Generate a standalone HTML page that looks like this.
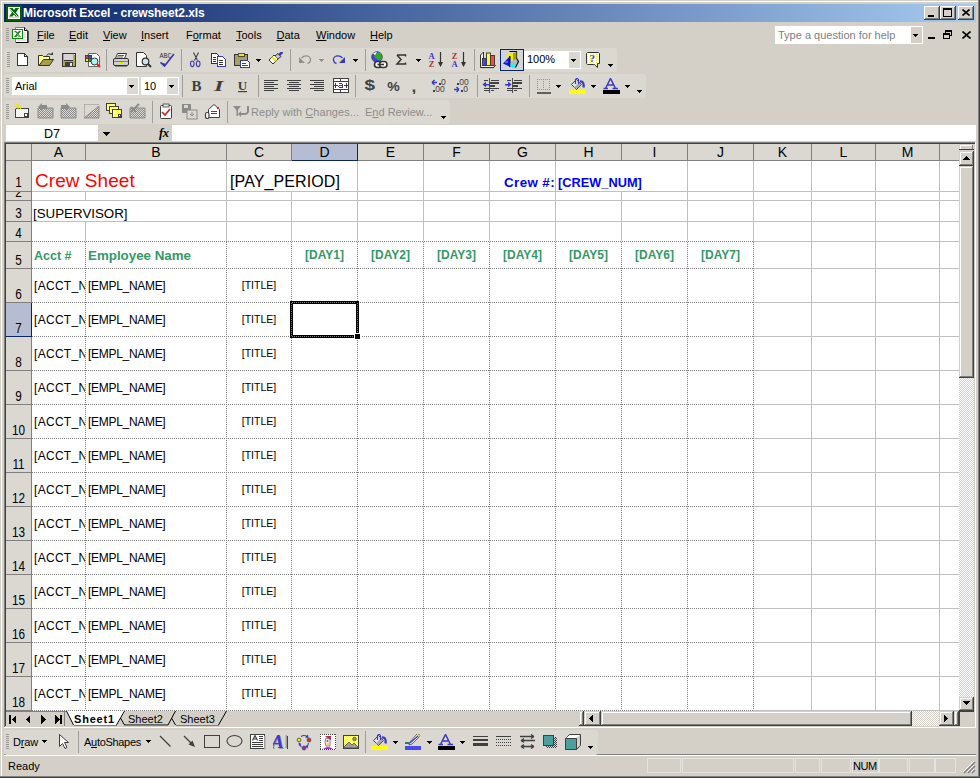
<!DOCTYPE html>
<html><head><meta charset="utf-8"><style>
html,body{margin:0;padding:0;}
body{width:980px;height:778px;position:relative;overflow:hidden;background:#D4D0C8;font-family:"Liberation Sans",sans-serif;}
body div, body svg{position:absolute;}
.t{white-space:nowrap;}
u{text-decoration:underline;text-underline-offset:1px;}
</style></head><body>
<div style="left:0px;top:0px;width:980px;height:778px;background:#D4D0C8;"></div>
<div style="left:1px;top:1px;width:977px;height:1px;background:#FFFFFF;"></div>
<div style="left:1px;top:1px;width:1px;height:775px;background:#FFFFFF;"></div>
<div style="left:978px;top:0px;width:1px;height:777px;background:#808080;"></div>
<div style="left:0px;top:776px;width:979px;height:1px;background:#808080;"></div>
<div style="left:979px;top:0px;width:1px;height:778px;background:#404040;"></div>
<div style="left:0px;top:777px;width:980px;height:1px;background:#404040;"></div>
<div style="left:4px;top:4px;width:972px;height:18px;background:linear-gradient(90deg,#0A246A,#A6CAF0);"></div>
<svg style="left:6px;top:5px;shape-rendering:auto" width="16" height="16" viewBox="0 0 16 16" shape-rendering="crispEdges"><rect x="0" y="0" width="16" height="16" fill="#0A5A0A"/><rect x="2" y="2" width="12" height="12" fill="#fff"/><path d="M3 3H6.5L8 5L9.5 3H13L10 7.5L13 11.5H9.5L8 9.5L6.5 11.5H3L6 7.5Z" fill="#0A6A0A"/><path d="M3.5 3.5L11.5 11.5" stroke="#fff" stroke-width="0.8"/><rect x="3" y="12" width="10" height="0.8" fill="#0A6A0A" opacity="0.3"/></svg>
<div class="t" style="left:23px;top:7px;font-size:12px;line-height:12px;color:#fff;font-weight:bold;letter-spacing:-0.1px;">Microsoft Excel - crewsheet2.xls</div>
<div style="left:924px;top:6px;width:16px;height:14px;background:#404040;"></div>
<div style="left:924px;top:6px;width:15px;height:13px;background:#FFFFFF;"></div>
<div style="left:925px;top:7px;width:14px;height:12px;background:#808080;"></div>
<div style="left:925px;top:7px;width:13px;height:11px;background:#D4D0C8;"></div>
<div style="left:940px;top:6px;width:16px;height:14px;background:#404040;"></div>
<div style="left:940px;top:6px;width:15px;height:13px;background:#FFFFFF;"></div>
<div style="left:941px;top:7px;width:14px;height:12px;background:#808080;"></div>
<div style="left:941px;top:7px;width:13px;height:11px;background:#D4D0C8;"></div>
<div style="left:958px;top:6px;width:16px;height:14px;background:#404040;"></div>
<div style="left:958px;top:6px;width:15px;height:13px;background:#FFFFFF;"></div>
<div style="left:959px;top:7px;width:14px;height:12px;background:#808080;"></div>
<div style="left:959px;top:7px;width:13px;height:11px;background:#D4D0C8;"></div>
<div style="left:928px;top:15px;width:6px;height:2px;background:#000;"></div>
<svg style="left:943px;top:8px;" width="10" height="9" viewBox="0 0 10 9" shape-rendering="crispEdges"><rect x="0" y="0" width="9" height="9" fill="#000"/><rect x="1" y="2" width="7" height="6" fill="#D4D0C8"/></svg>
<svg style="left:962px;top:9px;" width="8" height="7" viewBox="0 0 8 7" shape-rendering="crispEdges"><path d="M0.5 0.5 L7.5 6.5 M7.5 0.5 L0.5 6.5" stroke="#000" stroke-width="1.6" shape-rendering="auto"/></svg>
<div style="left:6px;top:28px;width:3px;height:1px;background:#9A9893;"></div>
<div style="left:6px;top:30px;width:3px;height:1px;background:#9A9893;"></div>
<div style="left:6px;top:32px;width:3px;height:1px;background:#9A9893;"></div>
<div style="left:6px;top:34px;width:3px;height:1px;background:#9A9893;"></div>
<div style="left:6px;top:36px;width:3px;height:1px;background:#9A9893;"></div>
<div style="left:6px;top:38px;width:3px;height:1px;background:#9A9893;"></div>
<div style="left:6px;top:40px;width:3px;height:1px;background:#9A9893;"></div>
<svg style="left:12px;top:27px;shape-rendering:auto" width="17" height="17" viewBox="0 0 17 17" shape-rendering="crispEdges"><path d="M3.5 0.5H12.5L15.5 3.5V15.5H3.5Z" fill="#fff" stroke="#808080"/><path d="M4 15.5H16V4" fill="none" stroke="#000" stroke-width="1.2"/><path d="M12.5 0.5V3.5H15.5" fill="none" stroke="#000"/><path d="M10 6H14M10 8H14M10 10H14M5 13H14" stroke="#C8C8C8"/><rect x="0" y="2" width="11" height="10" fill="#0A8A0A"/><rect x="1" y="3" width="9" height="8" fill="#fff"/><path d="M2 4H4L5.5 5.5L7 4H9L6.5 7L9 10H7L5.5 8.5L4 10H2L4.5 7Z" fill="#0A7A0A"/><path d="M2.5 4.5L8 9.5" stroke="#fff" stroke-width="0.6"/></svg>
<div class="t" style="left:37px;top:30px;font-size:11px;line-height:11px;color:#000;"><u>F</u>ile</div>
<div class="t" style="left:69px;top:30px;font-size:11px;line-height:11px;color:#000;"><u>E</u>dit</div>
<div class="t" style="left:103px;top:30px;font-size:11px;line-height:11px;color:#000;"><u>V</u>iew</div>
<div class="t" style="left:141px;top:30px;font-size:11px;line-height:11px;color:#000;"><u>I</u>nsert</div>
<div class="t" style="left:186px;top:30px;font-size:11px;line-height:11px;color:#000;">F<u>o</u>rmat</div>
<div class="t" style="left:236px;top:30px;font-size:11px;line-height:11px;color:#000;"><u>T</u>ools</div>
<div class="t" style="left:276.5px;top:30px;font-size:11px;line-height:11px;color:#000;"><u>D</u>ata</div>
<div class="t" style="left:316px;top:30px;font-size:11px;line-height:11px;color:#000;"><u>W</u>indow</div>
<div class="t" style="left:370px;top:30px;font-size:11px;line-height:11px;color:#000;"><u>H</u>elp</div>
<div style="left:775px;top:26px;width:148px;height:18px;background:#fff;"></div>
<div style="left:911px;top:27px;width:11px;height:16px;background:#D4D0C8;"></div>
<svg style="left:913px;top:34px;" width="5" height="3" viewBox="0 0 5 3" shape-rendering="crispEdges"><rect x="0" y="0" width="5" height="1" fill="#000"/><rect x="1" y="1" width="3" height="1" fill="#000"/><rect x="2" y="2" width="1" height="1" fill="#000"/></svg>
<div class="t" style="left:778px;top:30px;font-size:11px;line-height:11px;color:#808080;">Type a question for help</div>
<div style="left:928px;top:37px;width:7px;height:2px;background:#000;"></div>
<svg style="left:943px;top:30px;" width="9" height="9" viewBox="0 0 9 9" shape-rendering="crispEdges"><rect x="2" y="0" width="7" height="6" fill="#000"/><rect x="3" y="2" width="5" height="3" fill="#D4D0C8"/><rect x="0" y="3" width="7" height="6" fill="#000"/><rect x="1" y="5" width="5" height="3" fill="#D4D0C8"/></svg>
<svg style="left:962px;top:31px;" width="9" height="8" viewBox="0 0 9 8" shape-rendering="crispEdges"><path d="M0.5 0.5 L8.5 7.5 M8.5 0.5 L0.5 7.5" stroke="#000" stroke-width="1.6" shape-rendering="auto"/></svg>
<div style="left:4px;top:48px;width:613px;height:24px;background:#DBD8D1;border-radius:3px;"></div>
<div style="left:4px;top:74px;width:642px;height:24px;background:#DBD8D1;border-radius:3px;"></div>
<div style="left:4px;top:100px;width:446px;height:24px;background:#DBD8D1;border-radius:3px;"></div>
<div style="left:7px;top:52px;width:3px;height:1px;background:#9A9893;"></div>
<div style="left:7px;top:54px;width:3px;height:1px;background:#9A9893;"></div>
<div style="left:7px;top:56px;width:3px;height:1px;background:#9A9893;"></div>
<div style="left:7px;top:58px;width:3px;height:1px;background:#9A9893;"></div>
<div style="left:7px;top:60px;width:3px;height:1px;background:#9A9893;"></div>
<div style="left:7px;top:62px;width:3px;height:1px;background:#9A9893;"></div>
<div style="left:7px;top:64px;width:3px;height:1px;background:#9A9893;"></div>
<div style="left:7px;top:66px;width:3px;height:1px;background:#9A9893;"></div>
<div style="left:6px;top:78px;width:3px;height:1px;background:#9A9893;"></div>
<div style="left:6px;top:80px;width:3px;height:1px;background:#9A9893;"></div>
<div style="left:6px;top:82px;width:3px;height:1px;background:#9A9893;"></div>
<div style="left:6px;top:84px;width:3px;height:1px;background:#9A9893;"></div>
<div style="left:6px;top:86px;width:3px;height:1px;background:#9A9893;"></div>
<div style="left:6px;top:88px;width:3px;height:1px;background:#9A9893;"></div>
<div style="left:6px;top:90px;width:3px;height:1px;background:#9A9893;"></div>
<div style="left:6px;top:92px;width:3px;height:1px;background:#9A9893;"></div>
<div style="left:6px;top:104px;width:3px;height:1px;background:#9A9893;"></div>
<div style="left:6px;top:106px;width:3px;height:1px;background:#9A9893;"></div>
<div style="left:6px;top:108px;width:3px;height:1px;background:#9A9893;"></div>
<div style="left:6px;top:110px;width:3px;height:1px;background:#9A9893;"></div>
<div style="left:6px;top:112px;width:3px;height:1px;background:#9A9893;"></div>
<div style="left:6px;top:114px;width:3px;height:1px;background:#9A9893;"></div>
<div style="left:6px;top:116px;width:3px;height:1px;background:#9A9893;"></div>
<div style="left:6px;top:118px;width:3px;height:1px;background:#9A9893;"></div>
<div style="left:106px;top:49px;width:1px;height:22px;background:#A09E99;"></div>
<div style="left:181px;top:49px;width:1px;height:22px;background:#A09E99;"></div>
<div style="left:290px;top:49px;width:1px;height:22px;background:#A09E99;"></div>
<div style="left:365px;top:49px;width:1px;height:22px;background:#A09E99;"></div>
<div style="left:474px;top:49px;width:1px;height:22px;background:#A09E99;"></div>
<div style="left:182px;top:75px;width:1px;height:22px;background:#A09E99;"></div>
<div style="left:258px;top:75px;width:1px;height:22px;background:#A09E99;"></div>
<div style="left:355px;top:75px;width:1px;height:22px;background:#A09E99;"></div>
<div style="left:477px;top:75px;width:1px;height:22px;background:#A09E99;"></div>
<div style="left:529px;top:75px;width:1px;height:22px;background:#A09E99;"></div>
<div style="left:152px;top:101px;width:1px;height:22px;background:#A09E99;"></div>
<div style="left:227px;top:101px;width:1px;height:22px;background:#A09E99;"></div>
<div style="left:6px;top:125px;width:92px;height:16px;background:#fff;"></div>
<div class="t" style="left:6px;top:128px;font-size:12.6px;line-height:12.6px;color:#000;width:92px;text-align:center;">D7</div>
<svg style="left:103px;top:132px;" width="7" height="4" viewBox="0 0 7 4" shape-rendering="crispEdges"><rect x="0" y="0" width="7" height="1" fill="#000"/><rect x="1" y="1" width="5" height="1" fill="#000"/><rect x="2" y="2" width="3" height="1" fill="#000"/><rect x="3" y="3" width="1" height="1" fill="#000"/></svg>
<div class="t" style="left:159px;top:127px;font-size:12.5px;line-height:12.5px;color:#000;font-weight:bold;font-family:Liberation Serif;letter-spacing:-0.5px;"><i>fx</i></div>
<div style="left:172px;top:125px;width:804px;height:16px;background:#fff;"></div>
<div style="left:4px;top:142px;width:971px;height:1px;background:#808080;"></div>
<div style="left:4px;top:142px;width:1px;height:585px;background:#808080;"></div>
<div style="left:5px;top:143px;width:970px;height:1px;background:#404040;"></div>
<div style="left:5px;top:143px;width:1px;height:583px;background:#404040;"></div>
<div style="left:975px;top:142px;width:1px;height:586px;background:#fff;"></div>
<div style="left:4px;top:727px;width:972px;height:1px;background:#fff;"></div>
<div style="left:32px;top:161px;width:927px;height:550px;background:#fff;"></div>
<div style="left:6px;top:144px;width:953px;height:16px;background:#DBD8D1;"></div>
<div style="left:6px;top:160px;width:953px;height:1px;background:#808080;"></div>
<div style="left:6px;top:161px;width:25px;height:550px;background:#DBD8D1;"></div>
<div style="left:31px;top:144px;width:1px;height:567px;background:#808080;"></div>
<div style="left:292px;top:144px;width:65px;height:16px;background:#B6BDD2;"></div>
<div style="left:292px;top:160px;width:66px;height:1px;background:#0A246A;"></div>
<div style="left:357px;top:144px;width:1px;height:17px;background:#0A246A;"></div>
<div style="left:6px;top:303px;width:25px;height:33px;background:#B6BDD2;"></div>
<div style="left:6px;top:336px;width:26px;height:1px;background:#0A246A;"></div>
<div style="left:31px;top:303px;width:1px;height:34px;background:#0A246A;"></div>
<div style="left:85px;top:144px;width:1px;height:16px;background:#808080;"></div>
<div style="left:226px;top:144px;width:1px;height:16px;background:#808080;"></div>
<div style="left:291px;top:144px;width:1px;height:16px;background:#808080;"></div>
<div style="left:423px;top:144px;width:1px;height:16px;background:#808080;"></div>
<div style="left:489px;top:144px;width:1px;height:16px;background:#808080;"></div>
<div style="left:555px;top:144px;width:1px;height:16px;background:#808080;"></div>
<div style="left:621px;top:144px;width:1px;height:16px;background:#808080;"></div>
<div style="left:687px;top:144px;width:1px;height:16px;background:#808080;"></div>
<div style="left:753px;top:144px;width:1px;height:16px;background:#808080;"></div>
<div style="left:811px;top:144px;width:1px;height:16px;background:#808080;"></div>
<div style="left:875px;top:144px;width:1px;height:16px;background:#808080;"></div>
<div style="left:939px;top:144px;width:1px;height:16px;background:#808080;"></div>
<div class="t" style="left:32px;top:145px;font-size:14px;line-height:14px;color:#000;width:53px;text-align:center;">A</div>
<div class="t" style="left:86px;top:145px;font-size:14px;line-height:14px;color:#000;width:140px;text-align:center;">B</div>
<div class="t" style="left:227px;top:145px;font-size:14px;line-height:14px;color:#000;width:64px;text-align:center;">C</div>
<div class="t" style="left:292px;top:145px;font-size:14px;line-height:14px;color:#000;width:65px;text-align:center;">D</div>
<div class="t" style="left:358px;top:145px;font-size:14px;line-height:14px;color:#000;width:65px;text-align:center;">E</div>
<div class="t" style="left:424px;top:145px;font-size:14px;line-height:14px;color:#000;width:65px;text-align:center;">F</div>
<div class="t" style="left:490px;top:145px;font-size:14px;line-height:14px;color:#000;width:65px;text-align:center;">G</div>
<div class="t" style="left:556px;top:145px;font-size:14px;line-height:14px;color:#000;width:65px;text-align:center;">H</div>
<div class="t" style="left:622px;top:145px;font-size:14px;line-height:14px;color:#000;width:65px;text-align:center;">I</div>
<div class="t" style="left:688px;top:145px;font-size:14px;line-height:14px;color:#000;width:65px;text-align:center;">J</div>
<div class="t" style="left:754px;top:145px;font-size:14px;line-height:14px;color:#000;width:57px;text-align:center;">K</div>
<div class="t" style="left:812px;top:145px;font-size:14px;line-height:14px;color:#000;width:63px;text-align:center;">L</div>
<div class="t" style="left:876px;top:145px;font-size:14px;line-height:14px;color:#000;width:63px;text-align:center;">M</div>
<div style="left:6px;top:191px;width:25px;height:1px;background:#808080;"></div>
<div style="left:6px;top:200px;width:25px;height:1px;background:#808080;"></div>
<div style="left:6px;top:221px;width:25px;height:1px;background:#808080;"></div>
<div style="left:6px;top:241px;width:25px;height:1px;background:#808080;"></div>
<div style="left:6px;top:268px;width:25px;height:1px;background:#808080;"></div>
<div style="left:6px;top:302px;width:25px;height:1px;background:#808080;"></div>
<div style="left:6px;top:370px;width:25px;height:1px;background:#808080;"></div>
<div style="left:6px;top:404px;width:25px;height:1px;background:#808080;"></div>
<div style="left:6px;top:438px;width:25px;height:1px;background:#808080;"></div>
<div style="left:6px;top:472px;width:25px;height:1px;background:#808080;"></div>
<div style="left:6px;top:506px;width:25px;height:1px;background:#808080;"></div>
<div style="left:6px;top:540px;width:25px;height:1px;background:#808080;"></div>
<div style="left:6px;top:574px;width:25px;height:1px;background:#808080;"></div>
<div style="left:6px;top:608px;width:25px;height:1px;background:#808080;"></div>
<div style="left:6px;top:642px;width:25px;height:1px;background:#808080;"></div>
<div style="left:6px;top:676px;width:25px;height:1px;background:#808080;"></div>
<div style="left:6px;top:710px;width:25px;height:1px;background:#808080;"></div>
<div style="left:6px;top:161px;width:25px;height:30px;overflow:hidden">
<div class="t" style="left:0;top:14px;width:25px;text-align:center;font-size:14px;line-height:14px;transform:scaleX(0.84)">1</div></div>
<div style="left:6px;top:192px;width:25px;height:8px;overflow:hidden">
<div class="t" style="left:0;top:-7px;width:25px;text-align:center;font-size:14px;line-height:14px;transform:scaleX(0.84)">2</div></div>
<div style="left:6px;top:201px;width:25px;height:20px;overflow:hidden">
<div class="t" style="left:0;top:5px;width:25px;text-align:center;font-size:14px;line-height:14px;transform:scaleX(0.84)">3</div></div>
<div style="left:6px;top:222px;width:25px;height:19px;overflow:hidden">
<div class="t" style="left:0;top:4px;width:25px;text-align:center;font-size:14px;line-height:14px;transform:scaleX(0.84)">4</div></div>
<div style="left:6px;top:242px;width:25px;height:26px;overflow:hidden">
<div class="t" style="left:0;top:11px;width:25px;text-align:center;font-size:14px;line-height:14px;transform:scaleX(0.84)">5</div></div>
<div style="left:6px;top:269px;width:25px;height:33px;overflow:hidden">
<div class="t" style="left:0;top:18px;width:25px;text-align:center;font-size:14px;line-height:14px;transform:scaleX(0.84)">6</div></div>
<div style="left:6px;top:303px;width:25px;height:33px;overflow:hidden">
<div class="t" style="left:0;top:18px;width:25px;text-align:center;font-size:14px;line-height:14px;transform:scaleX(0.84)">7</div></div>
<div style="left:6px;top:337px;width:25px;height:33px;overflow:hidden">
<div class="t" style="left:0;top:18px;width:25px;text-align:center;font-size:14px;line-height:14px;transform:scaleX(0.84)">8</div></div>
<div style="left:6px;top:371px;width:25px;height:33px;overflow:hidden">
<div class="t" style="left:0;top:18px;width:25px;text-align:center;font-size:14px;line-height:14px;transform:scaleX(0.84)">9</div></div>
<div style="left:6px;top:405px;width:25px;height:33px;overflow:hidden">
<div class="t" style="left:0;top:18px;width:25px;text-align:center;font-size:14px;line-height:14px;transform:scaleX(0.84)">10</div></div>
<div style="left:6px;top:439px;width:25px;height:33px;overflow:hidden">
<div class="t" style="left:0;top:18px;width:25px;text-align:center;font-size:14px;line-height:14px;transform:scaleX(0.84)">11</div></div>
<div style="left:6px;top:473px;width:25px;height:33px;overflow:hidden">
<div class="t" style="left:0;top:18px;width:25px;text-align:center;font-size:14px;line-height:14px;transform:scaleX(0.84)">12</div></div>
<div style="left:6px;top:507px;width:25px;height:33px;overflow:hidden">
<div class="t" style="left:0;top:18px;width:25px;text-align:center;font-size:14px;line-height:14px;transform:scaleX(0.84)">13</div></div>
<div style="left:6px;top:541px;width:25px;height:33px;overflow:hidden">
<div class="t" style="left:0;top:18px;width:25px;text-align:center;font-size:14px;line-height:14px;transform:scaleX(0.84)">14</div></div>
<div style="left:6px;top:575px;width:25px;height:33px;overflow:hidden">
<div class="t" style="left:0;top:18px;width:25px;text-align:center;font-size:14px;line-height:14px;transform:scaleX(0.84)">15</div></div>
<div style="left:6px;top:609px;width:25px;height:33px;overflow:hidden">
<div class="t" style="left:0;top:18px;width:25px;text-align:center;font-size:14px;line-height:14px;transform:scaleX(0.84)">16</div></div>
<div style="left:6px;top:643px;width:25px;height:33px;overflow:hidden">
<div class="t" style="left:0;top:18px;width:25px;text-align:center;font-size:14px;line-height:14px;transform:scaleX(0.84)">17</div></div>
<div style="left:6px;top:677px;width:25px;height:33px;overflow:hidden">
<div class="t" style="left:0;top:18px;width:25px;text-align:center;font-size:14px;line-height:14px;transform:scaleX(0.84)">18</div></div>
<div style="left:32px;top:191px;width:927px;height:1px;background:#C0C0C0;"></div>
<div style="left:32px;top:200px;width:927px;height:1px;background:#C0C0C0;"></div>
<div style="left:32px;top:221px;width:927px;height:1px;background:#C0C0C0;"></div>
<div style="left:32px;top:241px;width:721px;height:1px;background:repeating-linear-gradient(90deg,#808080 0 1px,#fff 1px 2px);"></div>
<div style="left:753px;top:241px;width:206px;height:1px;background:#C0C0C0;"></div>
<div style="left:32px;top:268px;width:721px;height:1px;background:repeating-linear-gradient(90deg,#808080 0 1px,#fff 1px 2px);"></div>
<div style="left:753px;top:268px;width:206px;height:1px;background:#C0C0C0;"></div>
<div style="left:32px;top:302px;width:721px;height:1px;background:repeating-linear-gradient(90deg,#808080 0 1px,#fff 1px 2px);"></div>
<div style="left:753px;top:302px;width:206px;height:1px;background:#C0C0C0;"></div>
<div style="left:32px;top:336px;width:721px;height:1px;background:repeating-linear-gradient(90deg,#808080 0 1px,#fff 1px 2px);"></div>
<div style="left:753px;top:336px;width:206px;height:1px;background:#C0C0C0;"></div>
<div style="left:32px;top:370px;width:721px;height:1px;background:repeating-linear-gradient(90deg,#808080 0 1px,#fff 1px 2px);"></div>
<div style="left:753px;top:370px;width:206px;height:1px;background:#C0C0C0;"></div>
<div style="left:32px;top:404px;width:721px;height:1px;background:repeating-linear-gradient(90deg,#808080 0 1px,#fff 1px 2px);"></div>
<div style="left:753px;top:404px;width:206px;height:1px;background:#C0C0C0;"></div>
<div style="left:32px;top:438px;width:721px;height:1px;background:repeating-linear-gradient(90deg,#808080 0 1px,#fff 1px 2px);"></div>
<div style="left:753px;top:438px;width:206px;height:1px;background:#C0C0C0;"></div>
<div style="left:32px;top:472px;width:721px;height:1px;background:repeating-linear-gradient(90deg,#808080 0 1px,#fff 1px 2px);"></div>
<div style="left:753px;top:472px;width:206px;height:1px;background:#C0C0C0;"></div>
<div style="left:32px;top:506px;width:721px;height:1px;background:repeating-linear-gradient(90deg,#808080 0 1px,#fff 1px 2px);"></div>
<div style="left:753px;top:506px;width:206px;height:1px;background:#C0C0C0;"></div>
<div style="left:32px;top:540px;width:721px;height:1px;background:repeating-linear-gradient(90deg,#808080 0 1px,#fff 1px 2px);"></div>
<div style="left:753px;top:540px;width:206px;height:1px;background:#C0C0C0;"></div>
<div style="left:32px;top:574px;width:721px;height:1px;background:repeating-linear-gradient(90deg,#808080 0 1px,#fff 1px 2px);"></div>
<div style="left:753px;top:574px;width:206px;height:1px;background:#C0C0C0;"></div>
<div style="left:32px;top:608px;width:721px;height:1px;background:repeating-linear-gradient(90deg,#808080 0 1px,#fff 1px 2px);"></div>
<div style="left:753px;top:608px;width:206px;height:1px;background:#C0C0C0;"></div>
<div style="left:32px;top:642px;width:721px;height:1px;background:repeating-linear-gradient(90deg,#808080 0 1px,#fff 1px 2px);"></div>
<div style="left:753px;top:642px;width:206px;height:1px;background:#C0C0C0;"></div>
<div style="left:32px;top:676px;width:721px;height:1px;background:repeating-linear-gradient(90deg,#808080 0 1px,#fff 1px 2px);"></div>
<div style="left:753px;top:676px;width:206px;height:1px;background:#C0C0C0;"></div>
<div style="left:32px;top:710px;width:721px;height:1px;background:repeating-linear-gradient(90deg,#808080 0 1px,#fff 1px 2px);"></div>
<div style="left:753px;top:710px;width:206px;height:1px;background:#C0C0C0;"></div>
<div style="left:85px;top:192px;width:1px;height:8px;background:#C0C0C0;"></div>
<div style="left:85px;top:222px;width:1px;height:19px;background:#C0C0C0;"></div>
<div style="left:85px;top:242px;width:1px;height:468px;background:repeating-linear-gradient(180deg,#808080 0 1px,#fff 1px 2px);"></div>
<div style="left:226px;top:161px;width:1px;height:30px;background:#C0C0C0;"></div>
<div style="left:226px;top:192px;width:1px;height:8px;background:#C0C0C0;"></div>
<div style="left:226px;top:201px;width:1px;height:20px;background:#C0C0C0;"></div>
<div style="left:226px;top:222px;width:1px;height:19px;background:#C0C0C0;"></div>
<div style="left:226px;top:242px;width:1px;height:468px;background:repeating-linear-gradient(180deg,#808080 0 1px,#fff 1px 2px);"></div>
<div style="left:291px;top:192px;width:1px;height:8px;background:#C0C0C0;"></div>
<div style="left:291px;top:201px;width:1px;height:20px;background:#C0C0C0;"></div>
<div style="left:291px;top:222px;width:1px;height:19px;background:#C0C0C0;"></div>
<div style="left:291px;top:242px;width:1px;height:468px;background:repeating-linear-gradient(180deg,#808080 0 1px,#fff 1px 2px);"></div>
<div style="left:357px;top:161px;width:1px;height:30px;background:#C0C0C0;"></div>
<div style="left:357px;top:192px;width:1px;height:8px;background:#C0C0C0;"></div>
<div style="left:357px;top:201px;width:1px;height:20px;background:#C0C0C0;"></div>
<div style="left:357px;top:222px;width:1px;height:19px;background:#C0C0C0;"></div>
<div style="left:357px;top:242px;width:1px;height:468px;background:repeating-linear-gradient(180deg,#808080 0 1px,#fff 1px 2px);"></div>
<div style="left:423px;top:161px;width:1px;height:30px;background:#C0C0C0;"></div>
<div style="left:423px;top:192px;width:1px;height:8px;background:#C0C0C0;"></div>
<div style="left:423px;top:201px;width:1px;height:20px;background:#C0C0C0;"></div>
<div style="left:423px;top:222px;width:1px;height:19px;background:#C0C0C0;"></div>
<div style="left:423px;top:242px;width:1px;height:468px;background:repeating-linear-gradient(180deg,#808080 0 1px,#fff 1px 2px);"></div>
<div style="left:489px;top:161px;width:1px;height:30px;background:#C0C0C0;"></div>
<div style="left:489px;top:192px;width:1px;height:8px;background:#C0C0C0;"></div>
<div style="left:489px;top:201px;width:1px;height:20px;background:#C0C0C0;"></div>
<div style="left:489px;top:222px;width:1px;height:19px;background:#C0C0C0;"></div>
<div style="left:489px;top:242px;width:1px;height:468px;background:repeating-linear-gradient(180deg,#808080 0 1px,#fff 1px 2px);"></div>
<div style="left:555px;top:161px;width:1px;height:30px;background:#C0C0C0;"></div>
<div style="left:555px;top:192px;width:1px;height:8px;background:#C0C0C0;"></div>
<div style="left:555px;top:201px;width:1px;height:20px;background:#C0C0C0;"></div>
<div style="left:555px;top:222px;width:1px;height:19px;background:#C0C0C0;"></div>
<div style="left:555px;top:242px;width:1px;height:468px;background:repeating-linear-gradient(180deg,#808080 0 1px,#fff 1px 2px);"></div>
<div style="left:621px;top:192px;width:1px;height:8px;background:#C0C0C0;"></div>
<div style="left:621px;top:201px;width:1px;height:20px;background:#C0C0C0;"></div>
<div style="left:621px;top:222px;width:1px;height:19px;background:#C0C0C0;"></div>
<div style="left:621px;top:242px;width:1px;height:468px;background:repeating-linear-gradient(180deg,#808080 0 1px,#fff 1px 2px);"></div>
<div style="left:687px;top:161px;width:1px;height:30px;background:#C0C0C0;"></div>
<div style="left:687px;top:192px;width:1px;height:8px;background:#C0C0C0;"></div>
<div style="left:687px;top:201px;width:1px;height:20px;background:#C0C0C0;"></div>
<div style="left:687px;top:222px;width:1px;height:19px;background:#C0C0C0;"></div>
<div style="left:687px;top:242px;width:1px;height:468px;background:repeating-linear-gradient(180deg,#808080 0 1px,#fff 1px 2px);"></div>
<div style="left:753px;top:161px;width:1px;height:30px;background:#C0C0C0;"></div>
<div style="left:753px;top:192px;width:1px;height:8px;background:#C0C0C0;"></div>
<div style="left:753px;top:201px;width:1px;height:20px;background:#C0C0C0;"></div>
<div style="left:753px;top:222px;width:1px;height:19px;background:#C0C0C0;"></div>
<div style="left:753px;top:242px;width:1px;height:468px;background:repeating-linear-gradient(180deg,#808080 0 1px,#fff 1px 2px);"></div>
<div style="left:811px;top:161px;width:1px;height:30px;background:#C0C0C0;"></div>
<div style="left:811px;top:192px;width:1px;height:8px;background:#C0C0C0;"></div>
<div style="left:811px;top:201px;width:1px;height:20px;background:#C0C0C0;"></div>
<div style="left:811px;top:222px;width:1px;height:19px;background:#C0C0C0;"></div>
<div style="left:811px;top:242px;width:1px;height:468px;background:#C0C0C0;"></div>
<div style="left:875px;top:161px;width:1px;height:30px;background:#C0C0C0;"></div>
<div style="left:875px;top:192px;width:1px;height:8px;background:#C0C0C0;"></div>
<div style="left:875px;top:201px;width:1px;height:20px;background:#C0C0C0;"></div>
<div style="left:875px;top:222px;width:1px;height:19px;background:#C0C0C0;"></div>
<div style="left:875px;top:242px;width:1px;height:468px;background:#C0C0C0;"></div>
<div style="left:939px;top:161px;width:1px;height:30px;background:#C0C0C0;"></div>
<div style="left:939px;top:192px;width:1px;height:8px;background:#C0C0C0;"></div>
<div style="left:939px;top:201px;width:1px;height:20px;background:#C0C0C0;"></div>
<div style="left:939px;top:222px;width:1px;height:19px;background:#C0C0C0;"></div>
<div style="left:939px;top:242px;width:1px;height:468px;background:#C0C0C0;"></div>
<div class="t" style="left:35px;top:171px;font-size:19px;line-height:19px;color:#FF0000;letter-spacing:0.05px;">Crew Sheet</div>
<div class="t" style="left:230px;top:174px;font-size:16px;line-height:16px;color:#000;letter-spacing:0.1px;">[PAY_PERIOD]</div>
<div class="t" style="left:489px;top:176px;font-size:13.33px;line-height:13.33px;color:#0000FF;font-weight:bold;width:66px;text-align:right;letter-spacing:0.4px;">Crew #:</div>
<div class="t" style="left:558px;top:177px;font-size:12.8px;line-height:12.8px;color:#0000FF;font-weight:bold;">[CREW_NUM]</div>
<div class="t" style="left:33px;top:207px;font-size:13.33px;line-height:13.33px;color:#000;">[SUPERVISOR]</div>
<div class="t" style="left:34px;top:250px;font-size:12.5px;line-height:12.5px;color:#339966;font-weight:bold;">Acct #</div>
<div class="t" style="left:88px;top:249px;font-size:13.33px;line-height:13.33px;color:#339966;font-weight:bold;">Employee Name</div>
<div class="t" style="left:292px;top:249px;font-size:12px;line-height:12px;color:#339966;font-weight:bold;width:65px;text-align:center;">[DAY1]</div>
<div class="t" style="left:358px;top:249px;font-size:12px;line-height:12px;color:#339966;font-weight:bold;width:65px;text-align:center;">[DAY2]</div>
<div class="t" style="left:424px;top:249px;font-size:12px;line-height:12px;color:#339966;font-weight:bold;width:65px;text-align:center;">[DAY3]</div>
<div class="t" style="left:490px;top:249px;font-size:12px;line-height:12px;color:#339966;font-weight:bold;width:65px;text-align:center;">[DAY4]</div>
<div class="t" style="left:556px;top:249px;font-size:12px;line-height:12px;color:#339966;font-weight:bold;width:65px;text-align:center;">[DAY5]</div>
<div class="t" style="left:622px;top:249px;font-size:12px;line-height:12px;color:#339966;font-weight:bold;width:65px;text-align:center;">[DAY6]</div>
<div class="t" style="left:688px;top:249px;font-size:12px;line-height:12px;color:#339966;font-weight:bold;width:65px;text-align:center;">[DAY7]</div>
<div style="left:32px;top:269px;width:53px;height:33px;overflow:hidden">
<div class="t" style="left:2px;top:11px;font-size:12px;line-height:12px;color:#000;letter-spacing:0.3px;">[ACCT_NUM]</div>
</div>
<div class="t" style="left:88px;top:280px;font-size:12px;line-height:12px;color:#000;letter-spacing:-0.3px;">[EMPL_NAME]</div>
<div class="t" style="left:227px;top:280px;font-size:10.5px;line-height:10.5px;color:#000;width:64px;text-align:center;">[TITLE]</div>
<div style="left:32px;top:303px;width:53px;height:33px;overflow:hidden">
<div class="t" style="left:2px;top:11px;font-size:12px;line-height:12px;color:#000;letter-spacing:0.3px;">[ACCT_NUM]</div>
</div>
<div class="t" style="left:88px;top:314px;font-size:12px;line-height:12px;color:#000;letter-spacing:-0.3px;">[EMPL_NAME]</div>
<div class="t" style="left:227px;top:314px;font-size:10.5px;line-height:10.5px;color:#000;width:64px;text-align:center;">[TITLE]</div>
<div style="left:32px;top:337px;width:53px;height:33px;overflow:hidden">
<div class="t" style="left:2px;top:11px;font-size:12px;line-height:12px;color:#000;letter-spacing:0.3px;">[ACCT_NUM]</div>
</div>
<div class="t" style="left:88px;top:348px;font-size:12px;line-height:12px;color:#000;letter-spacing:-0.3px;">[EMPL_NAME]</div>
<div class="t" style="left:227px;top:348px;font-size:10.5px;line-height:10.5px;color:#000;width:64px;text-align:center;">[TITLE]</div>
<div style="left:32px;top:371px;width:53px;height:33px;overflow:hidden">
<div class="t" style="left:2px;top:11px;font-size:12px;line-height:12px;color:#000;letter-spacing:0.3px;">[ACCT_NUM]</div>
</div>
<div class="t" style="left:88px;top:382px;font-size:12px;line-height:12px;color:#000;letter-spacing:-0.3px;">[EMPL_NAME]</div>
<div class="t" style="left:227px;top:382px;font-size:10.5px;line-height:10.5px;color:#000;width:64px;text-align:center;">[TITLE]</div>
<div style="left:32px;top:405px;width:53px;height:33px;overflow:hidden">
<div class="t" style="left:2px;top:11px;font-size:12px;line-height:12px;color:#000;letter-spacing:0.3px;">[ACCT_NUM]</div>
</div>
<div class="t" style="left:88px;top:416px;font-size:12px;line-height:12px;color:#000;letter-spacing:-0.3px;">[EMPL_NAME]</div>
<div class="t" style="left:227px;top:416px;font-size:10.5px;line-height:10.5px;color:#000;width:64px;text-align:center;">[TITLE]</div>
<div style="left:32px;top:439px;width:53px;height:33px;overflow:hidden">
<div class="t" style="left:2px;top:11px;font-size:12px;line-height:12px;color:#000;letter-spacing:0.3px;">[ACCT_NUM]</div>
</div>
<div class="t" style="left:88px;top:450px;font-size:12px;line-height:12px;color:#000;letter-spacing:-0.3px;">[EMPL_NAME]</div>
<div class="t" style="left:227px;top:450px;font-size:10.5px;line-height:10.5px;color:#000;width:64px;text-align:center;">[TITLE]</div>
<div style="left:32px;top:473px;width:53px;height:33px;overflow:hidden">
<div class="t" style="left:2px;top:11px;font-size:12px;line-height:12px;color:#000;letter-spacing:0.3px;">[ACCT_NUM]</div>
</div>
<div class="t" style="left:88px;top:484px;font-size:12px;line-height:12px;color:#000;letter-spacing:-0.3px;">[EMPL_NAME]</div>
<div class="t" style="left:227px;top:484px;font-size:10.5px;line-height:10.5px;color:#000;width:64px;text-align:center;">[TITLE]</div>
<div style="left:32px;top:507px;width:53px;height:33px;overflow:hidden">
<div class="t" style="left:2px;top:11px;font-size:12px;line-height:12px;color:#000;letter-spacing:0.3px;">[ACCT_NUM]</div>
</div>
<div class="t" style="left:88px;top:518px;font-size:12px;line-height:12px;color:#000;letter-spacing:-0.3px;">[EMPL_NAME]</div>
<div class="t" style="left:227px;top:518px;font-size:10.5px;line-height:10.5px;color:#000;width:64px;text-align:center;">[TITLE]</div>
<div style="left:32px;top:541px;width:53px;height:33px;overflow:hidden">
<div class="t" style="left:2px;top:11px;font-size:12px;line-height:12px;color:#000;letter-spacing:0.3px;">[ACCT_NUM]</div>
</div>
<div class="t" style="left:88px;top:552px;font-size:12px;line-height:12px;color:#000;letter-spacing:-0.3px;">[EMPL_NAME]</div>
<div class="t" style="left:227px;top:552px;font-size:10.5px;line-height:10.5px;color:#000;width:64px;text-align:center;">[TITLE]</div>
<div style="left:32px;top:575px;width:53px;height:33px;overflow:hidden">
<div class="t" style="left:2px;top:11px;font-size:12px;line-height:12px;color:#000;letter-spacing:0.3px;">[ACCT_NUM]</div>
</div>
<div class="t" style="left:88px;top:586px;font-size:12px;line-height:12px;color:#000;letter-spacing:-0.3px;">[EMPL_NAME]</div>
<div class="t" style="left:227px;top:586px;font-size:10.5px;line-height:10.5px;color:#000;width:64px;text-align:center;">[TITLE]</div>
<div style="left:32px;top:609px;width:53px;height:33px;overflow:hidden">
<div class="t" style="left:2px;top:11px;font-size:12px;line-height:12px;color:#000;letter-spacing:0.3px;">[ACCT_NUM]</div>
</div>
<div class="t" style="left:88px;top:620px;font-size:12px;line-height:12px;color:#000;letter-spacing:-0.3px;">[EMPL_NAME]</div>
<div class="t" style="left:227px;top:620px;font-size:10.5px;line-height:10.5px;color:#000;width:64px;text-align:center;">[TITLE]</div>
<div style="left:32px;top:643px;width:53px;height:33px;overflow:hidden">
<div class="t" style="left:2px;top:11px;font-size:12px;line-height:12px;color:#000;letter-spacing:0.3px;">[ACCT_NUM]</div>
</div>
<div class="t" style="left:88px;top:654px;font-size:12px;line-height:12px;color:#000;letter-spacing:-0.3px;">[EMPL_NAME]</div>
<div class="t" style="left:227px;top:654px;font-size:10.5px;line-height:10.5px;color:#000;width:64px;text-align:center;">[TITLE]</div>
<div style="left:32px;top:677px;width:53px;height:33px;overflow:hidden">
<div class="t" style="left:2px;top:11px;font-size:12px;line-height:12px;color:#000;letter-spacing:0.3px;">[ACCT_NUM]</div>
</div>
<div class="t" style="left:88px;top:688px;font-size:12px;line-height:12px;color:#000;letter-spacing:-0.3px;">[EMPL_NAME]</div>
<div class="t" style="left:227px;top:688px;font-size:10.5px;line-height:10.5px;color:#000;width:64px;text-align:center;">[TITLE]</div>
<div style="left:290px;top:301px;width:69px;height:3px;background:#000;"></div>
<div style="left:290px;top:301px;width:3px;height:37px;background:#000;"></div>
<div style="left:290px;top:335px;width:64px;height:3px;background:#000;"></div>
<div style="left:356px;top:301px;width:3px;height:32px;background:#000;"></div>
<div style="left:354px;top:333px;width:7px;height:7px;background:#fff;"></div>
<div style="left:355px;top:334px;width:5px;height:5px;background:#000;"></div>
<div style="left:292px;top:302px;width:64px;height:1px;background:repeating-linear-gradient(90deg,#808080 0 1px,transparent 1px 2px);"></div>
<div style="left:291px;top:303px;width:1px;height:34px;background:repeating-linear-gradient(180deg,#808080 0 1px,transparent 1px 2px);"></div>
<div style="left:357px;top:303px;width:1px;height:30px;background:repeating-linear-gradient(180deg,#808080 0 1px,transparent 1px 2px);"></div>
<div style="left:292px;top:336px;width:62px;height:1px;background:repeating-linear-gradient(90deg,#808080 0 1px,transparent 1px 2px);"></div>
<div style="left:959px;top:144px;width:15px;height:567px;background:conic-gradient(#fff 25%,#D4D0C8 0 50%,#fff 0 75%,#D4D0C8 0) 0 0/2px 2px;"></div>
<div style="left:959px;top:144px;width:15px;height:7px;background:#D4D0C8;"></div>
<div style="left:960px;top:145px;width:13px;height:1px;background:#fff;"></div>
<div style="left:960px;top:145px;width:1px;height:4px;background:#fff;"></div>
<div style="left:972px;top:145px;width:1px;height:4px;background:#808080;"></div>
<div style="left:959px;top:149px;width:15px;height:1px;background:#404040;"></div>
<div style="left:959px;top:151px;width:15px;height:15px;background:#404040;"></div>
<div style="left:959px;top:151px;width:14px;height:14px;background:#D4D0C8;"></div>
<div style="left:960px;top:152px;width:13px;height:13px;background:#808080;"></div>
<div style="left:960px;top:152px;width:12px;height:12px;background:#FFFFFF;"></div>
<div style="left:961px;top:153px;width:11px;height:11px;background:#D4D0C8;"></div>
<svg style="left:963px;top:156px;" width="7" height="4" viewBox="0 0 7 4" shape-rendering="crispEdges"><path d="M3 0 L7 4 L0 4 Z" fill="#000" shape-rendering="crispEdges"/></svg>
<div style="left:959px;top:166px;width:15px;height:212px;background:#404040;"></div>
<div style="left:959px;top:166px;width:14px;height:211px;background:#D4D0C8;"></div>
<div style="left:960px;top:167px;width:13px;height:210px;background:#808080;"></div>
<div style="left:960px;top:167px;width:12px;height:209px;background:#FFFFFF;"></div>
<div style="left:961px;top:168px;width:11px;height:208px;background:#D4D0C8;"></div>
<div style="left:959px;top:697px;width:15px;height:14px;background:#404040;"></div>
<div style="left:959px;top:697px;width:14px;height:13px;background:#D4D0C8;"></div>
<div style="left:960px;top:698px;width:13px;height:12px;background:#808080;"></div>
<div style="left:960px;top:698px;width:12px;height:11px;background:#FFFFFF;"></div>
<div style="left:961px;top:699px;width:11px;height:10px;background:#D4D0C8;"></div>
<svg style="left:963px;top:701px;" width="7" height="4" viewBox="0 0 7 4" shape-rendering="crispEdges"><path d="M0 0 L7 0 L3.5 4 Z" fill="#000"/></svg>
<div style="left:6px;top:711px;width:574px;height:15px;background:#D4D0C8;"></div>
<div style="left:6px;top:711px;width:60px;height:1px;background:#808080;"></div>
<svg style="left:9px;top:715px;" width="7" height="9" viewBox="0 0 7 9" shape-rendering="crispEdges"><rect x="0" y="0" width="2" height="9" fill="#000"/><path d="M7 0 L7 9 L3 4.5 Z" fill="#000"/></svg>
<svg style="left:25px;top:715px;" width="5" height="9" viewBox="0 0 5 9" shape-rendering="crispEdges"><path d="M5 0 L5 9 L0.5 4.5 Z" fill="#000"/></svg>
<svg style="left:41px;top:715px;" width="5" height="9" viewBox="0 0 5 9" shape-rendering="crispEdges"><path d="M0 0 L0 9 L4.5 4.5 Z" fill="#000"/></svg>
<svg style="left:55px;top:715px;" width="8" height="9" viewBox="0 0 8 9" shape-rendering="crispEdges"><path d="M0 0 L0 9 L4.5 4.5 Z" fill="#000"/><rect x="5" y="0" width="2" height="9" fill="#000"/></svg>
<div style="left:64px;top:711px;width:1px;height:15px;background:#808080;"></div>
<svg style="left:0px;top:711px;shape-rendering:auto" width="240" height="16" viewBox="0 0 240 16" shape-rendering="crispEdges"><path d="M66 0 L125 0 L117 14 L74 14 Z" fill="#fff"/><path d="M66.5 0 L73.5 14" stroke="#000" fill="none"/><path d="M124.5 0 L116.5 14" stroke="#000" fill="none"/><path d="M74 14.5 H117" stroke="#808080" fill="none"/><path d="M120.5 7 L124.5 14 H168 L175.5 0" stroke="#000" fill="none"/><path d="M125 14.5 H168" stroke="#808080"/><path d="M171.5 7 L175.5 14" stroke="#000" fill="none"/><path d="M176 14.5 H219" stroke="#808080"/><path d="M226.5 0 L218.5 14" stroke="#000" fill="none"/></svg>
<div class="t" style="left:74px;top:714px;font-size:11px;line-height:11px;color:#000;font-weight:bold;letter-spacing:0.8px;">Sheet1</div>
<div class="t" style="left:128px;top:714px;font-size:11px;line-height:11px;color:#000;">Sheet2</div>
<div class="t" style="left:180px;top:714px;font-size:11px;line-height:11px;color:#000;">Sheet3</div>
<div style="left:579px;top:711px;width:380px;height:15px;background:conic-gradient(#fff 25%,#D4D0C8 0 50%,#fff 0 75%,#D4D0C8 0) 0 0/2px 2px;"></div>
<div style="left:579px;top:711px;width:5px;height:15px;background:#404040;"></div>
<div style="left:579px;top:711px;width:4px;height:14px;background:#D4D0C8;"></div>
<div style="left:580px;top:712px;width:3px;height:13px;background:#808080;"></div>
<div style="left:580px;top:712px;width:2px;height:12px;background:#FFFFFF;"></div>
<div style="left:581px;top:713px;width:1px;height:11px;background:#D4D0C8;"></div>
<div style="left:584px;top:711px;width:17px;height:15px;background:#404040;"></div>
<div style="left:584px;top:711px;width:16px;height:14px;background:#D4D0C8;"></div>
<div style="left:585px;top:712px;width:15px;height:13px;background:#808080;"></div>
<div style="left:585px;top:712px;width:14px;height:12px;background:#FFFFFF;"></div>
<div style="left:586px;top:713px;width:13px;height:11px;background:#D4D0C8;"></div>
<svg style="left:589px;top:715px;" width="4" height="7" viewBox="0 0 4 7" shape-rendering="crispEdges"><path d="M4 0 L4 7 L0 3.5 Z" fill="#000"/></svg>
<div style="left:601px;top:711px;width:311px;height:15px;background:#404040;"></div>
<div style="left:601px;top:711px;width:310px;height:14px;background:#D4D0C8;"></div>
<div style="left:602px;top:712px;width:309px;height:13px;background:#808080;"></div>
<div style="left:602px;top:712px;width:308px;height:12px;background:#FFFFFF;"></div>
<div style="left:603px;top:713px;width:307px;height:11px;background:#D4D0C8;"></div>
<div style="left:939px;top:711px;width:15px;height:15px;background:#404040;"></div>
<div style="left:939px;top:711px;width:14px;height:14px;background:#D4D0C8;"></div>
<div style="left:940px;top:712px;width:13px;height:13px;background:#808080;"></div>
<div style="left:940px;top:712px;width:12px;height:12px;background:#FFFFFF;"></div>
<div style="left:941px;top:713px;width:11px;height:11px;background:#D4D0C8;"></div>
<svg style="left:944px;top:715px;" width="4" height="7" viewBox="0 0 4 7" shape-rendering="crispEdges"><path d="M0 0 L0 7 L4 3.5 Z" fill="#000"/></svg>
<div style="left:954px;top:711px;width:5px;height:15px;background:#404040;"></div>
<div style="left:954px;top:711px;width:4px;height:14px;background:#D4D0C8;"></div>
<div style="left:955px;top:712px;width:3px;height:13px;background:#808080;"></div>
<div style="left:955px;top:712px;width:2px;height:12px;background:#FFFFFF;"></div>
<div style="left:956px;top:713px;width:1px;height:11px;background:#D4D0C8;"></div>
<div style="left:959px;top:711px;width:16px;height:16px;background:#D4D0C8;"></div>
<div style="left:959px;top:711px;width:1px;height:15px;background:#404040;"></div>
<div style="left:959px;top:711px;width:15px;height:1px;background:#404040;"></div>
<div style="left:4px;top:754px;width:972px;height:1px;background:#808080;"></div>
<div style="left:4px;top:730px;width:594px;height:25px;background:#DBD8D1;border-radius:3px;"></div>
<div style="left:6px;top:734px;width:3px;height:1px;background:#9A9893;"></div>
<div style="left:6px;top:736px;width:3px;height:1px;background:#9A9893;"></div>
<div style="left:6px;top:738px;width:3px;height:1px;background:#9A9893;"></div>
<div style="left:6px;top:740px;width:3px;height:1px;background:#9A9893;"></div>
<div style="left:6px;top:742px;width:3px;height:1px;background:#9A9893;"></div>
<div style="left:6px;top:744px;width:3px;height:1px;background:#9A9893;"></div>
<div style="left:6px;top:746px;width:3px;height:1px;background:#9A9893;"></div>
<div style="left:6px;top:748px;width:3px;height:1px;background:#9A9893;"></div>
<div class="t" style="left:13px;top:737px;font-size:11px;line-height:11px;color:#000;letter-spacing:-0.2px;">D<u>r</u>aw</div>
<svg style="left:42px;top:740px;" width="5" height="3" viewBox="0 0 5 3" shape-rendering="crispEdges"><rect x="0" y="0" width="5" height="1" fill="#000"/><rect x="1" y="1" width="3" height="1" fill="#000"/><rect x="2" y="2" width="1" height="1" fill="#000"/></svg>
<div style="left:78px;top:731px;width:1px;height:22px;background:#A09E99;"></div>
<div class="t" style="left:84px;top:737px;font-size:11px;line-height:11px;color:#000;letter-spacing:-0.3px;">A<u>u</u>toShapes</div>
<svg style="left:146px;top:740px;" width="5" height="3" viewBox="0 0 5 3" shape-rendering="crispEdges"><rect x="0" y="0" width="5" height="1" fill="#000"/><rect x="1" y="1" width="3" height="1" fill="#000"/><rect x="2" y="2" width="1" height="1" fill="#000"/></svg>
<div style="left:365px;top:731px;width:1px;height:22px;background:#A09E99;"></div>
<div style="left:4px;top:755px;width:972px;height:1px;background:#fff;"></div>
<div class="t" style="left:8px;top:761px;font-size:11px;line-height:11px;color:#000;">Ready</div>
<div style="left:647px;top:758px;width:34px;height:15px;background:transparent;box-sizing:border-box;border:1px solid #E6E4DF;"></div>
<div style="left:682px;top:758px;width:112px;height:15px;background:transparent;box-sizing:border-box;border:1px solid #E6E4DF;"></div>
<div style="left:795px;top:758px;width:25px;height:15px;background:transparent;box-sizing:border-box;border:1px solid #E6E4DF;"></div>
<div style="left:821px;top:758px;width:30px;height:15px;background:transparent;box-sizing:border-box;border:1px solid #E6E4DF;"></div>
<div style="left:852px;top:758px;width:27px;height:15px;background:transparent;box-sizing:border-box;border:1px solid #E6E4DF;"></div>
<div style="left:879px;top:758px;width:29px;height:15px;background:transparent;box-sizing:border-box;border:1px solid #E6E4DF;"></div>
<div style="left:909px;top:758px;width:26px;height:15px;background:transparent;box-sizing:border-box;border:1px solid #E6E4DF;"></div>
<div style="left:935px;top:758px;width:21px;height:15px;background:transparent;box-sizing:border-box;border:1px solid #E6E4DF;"></div>
<div class="t" style="left:853px;top:761px;font-size:11px;line-height:11px;color:#000;letter-spacing:-0.4px;">NUM</div>
<svg style="left:963px;top:761px;" width="13" height="13" viewBox="0 0 13 13" shape-rendering="crispEdges"><path d="M12 1 L1 12 M12 5 L5 12 M12 9 L9 12" stroke="#808080" stroke-width="1.5" fill="none" shape-rendering="auto"/><path d="M11 0 L0 11 M11 4 L4 11 M11 8 L8 11" stroke="#fff" stroke-width="1" fill="none" shape-rendering="auto"/></svg>
<svg style="left:15px;top:52px;" width="16" height="16" viewBox="0 0 16 16" shape-rendering="crispEdges"><path d="M2.5 1.5H9.5L12.5 4.5V13.5H2.5Z" fill="#fff" stroke="#333"/><rect x="9" y="2" width="1" height="3" fill="#333"/><rect x="9" y="4" width="3" height="1" fill="#333"/></svg>
<svg style="left:38px;top:52px;shape-rendering:auto" width="16" height="16" viewBox="0 0 16 16" shape-rendering="crispEdges"><path d="M0.5 3.5H4.5L5.5 4.5H11.5V13.5H0.5Z" fill="#FFFF80" stroke="#333"/><path d="M1 13.5L5.5 7.5H15.5L11.5 13.5Z" fill="#A8A048" stroke="#333" stroke-linejoin="round"/><path d="M8.5 3.5Q10.5 0.5 13.5 2.5" fill="none" stroke="#333"/><path d="M12 3H15V0Z" fill="#333"/></svg>
<svg style="left:61px;top:52px;" width="16" height="16" viewBox="0 0 16 16" shape-rendering="crispEdges"><rect x="1" y="1" width="14" height="14" fill="#333"/><rect x="2" y="2" width="12" height="12" fill="#B0AA48"/><rect x="3" y="2" width="9" height="6" fill="#D6D6D6"/><rect x="3" y="8" width="9" height="1" fill="#333"/><rect x="4" y="10" width="8" height="5" fill="#404040"/><rect x="9" y="11" width="2" height="3" fill="#E8E8E8"/><rect x="13" y="2" width="1" height="1" fill="#fff"/></svg>
<svg style="left:85px;top:52px;shape-rendering:auto" width="16" height="16" viewBox="0 0 16 16" shape-rendering="crispEdges"><path d="M3.5 1.5H11.5L14.5 4.5V14.5H3.5Z" fill="#fff" stroke="#666"/><rect x="0" y="3" width="7" height="7" fill="#404040"/><rect x="1" y="4" width="2" height="2" fill="#F03030"/><rect x="4" y="4" width="2" height="2" fill="#3050F0"/><rect x="1" y="7" width="2" height="2" fill="#F0F020"/><rect x="4" y="7" width="2" height="2" fill="#30A030"/><circle cx="9.5" cy="9.5" r="3.5" fill="#B0F0F8" stroke="#333"/><path d="M12 12L15 15" stroke="#E02020" stroke-width="2"/></svg>
<svg style="left:113px;top:52px;shape-rendering:auto" width="16" height="16" viewBox="0 0 16 16" shape-rendering="crispEdges"><path d="M4.5 1.5H13.5L11.5 6.5H2.5Z" fill="#fff" stroke="#333"/><path d="M5 3.5H11M4 5H10" stroke="#333" stroke-width="0.8"/><rect x="0.5" y="6.5" width="15" height="7" rx="1.5" fill="#D0D0D0" stroke="#333"/><rect x="1" y="9" width="14" height="1" fill="#808080"/><rect x="7" y="10" width="3" height="1" fill="#E0E000"/><rect x="2" y="13" width="12" height="1.5" fill="#333"/></svg>
<svg style="left:136px;top:52px;shape-rendering:auto" width="16" height="16" viewBox="0 0 16 16" shape-rendering="crispEdges"><path d="M0.5 0.5H7.5L10.5 3.5V14.5H0.5Z" fill="#fff" stroke="#333"/><circle cx="9.5" cy="9.5" r="3.3" fill="#C8E8F0" stroke="#333" stroke-width="1.2"/><path d="M12 12L15 15" stroke="#333" stroke-width="2"/></svg>
<svg style="left:159px;top:52px;shape-rendering:auto" width="16" height="16" viewBox="0 0 16 16" shape-rendering="crispEdges"><text x="0.5" y="6" font-family="Liberation Mono" font-size="7" fill="#333" textLength="12" lengthAdjust="spacingAndGlyphs">ABC</text><path d="M1.5 10.5L5.5 14L15 2" fill="none" stroke="#3838A8" stroke-width="1.6"/><path d="M1 10L5.5 14.5L7 12Z" fill="#3838A8"/></svg>
<svg style="left:188px;top:52px;shape-rendering:auto" width="16" height="16" viewBox="0 0 16 16" shape-rendering="crispEdges"><path d="M5.5 0.5L9.5 8.5M10.5 0.5L6.5 8.5" stroke="#404040" stroke-width="1.1" fill="none"/><ellipse cx="4.3" cy="11.8" rx="1.8" ry="2.8" fill="none" stroke="#3A3AB0" stroke-width="1.1"/><ellipse cx="10.2" cy="11.8" rx="1.8" ry="2.8" fill="none" stroke="#3A3AB0" stroke-width="1.1"/></svg>
<svg style="left:210px;top:52px;" width="16" height="16" viewBox="0 0 16 16" shape-rendering="crispEdges"><path d="M1.5 1.5H6.5L8.5 3.5V11.5H1.5Z" fill="#fff" stroke="#333"/><path d="M3 5H6M3 7H6M3 9H6" stroke="#333"/><path d="M7.5 4.5H12.5L15.5 7.5V14.5H7.5Z" fill="#fff" stroke="#3A3AB0"/><path d="M9 8H13M9 10H13M9 12H13" stroke="#333"/></svg>
<svg style="left:234px;top:52px;" width="16" height="16" viewBox="0 0 16 16" shape-rendering="crispEdges"><rect x="0.5" y="2.5" width="13" height="11" rx="1" fill="#A8A060" stroke="#333"/><rect x="4" y="1" width="6" height="3" fill="#F0E040" stroke="#333" stroke-width="0.8"/><path d="M6.5 8.5H13.5L15.5 10.5V15.5H6.5Z" fill="#fff" stroke="#3A3AB0"/><path d="M8 11H12M8 13H14" stroke="#3A3AB0"/></svg>
<svg style="left:256px;top:59px;" width="5" height="3" viewBox="0 0 5 3" shape-rendering="crispEdges"><rect x="0" y="0" width="5" height="1" fill="#000"/><rect x="1" y="1" width="3" height="1" fill="#000"/><rect x="2" y="2" width="1" height="1" fill="#000"/></svg>
<svg style="left:268px;top:52px;shape-rendering:auto" width="16" height="16" viewBox="0 0 16 16" shape-rendering="crispEdges"><path d="M1 8L6 3L10 7L5 12Z" fill="#fff" stroke="#333"/><path d="M4 5L8 9" stroke="#E8E820" stroke-width="2"/><path d="M7 4L10 1.5L13 4.5L10 7" fill="#C8C8C8" stroke="#333"/><path d="M11 3L14.5 0" stroke="#3A3AB0" stroke-width="2.5"/><path d="M1 14.5H5L6 13" stroke="#F0F040" stroke-width="1" stroke-dasharray="1 1" fill="none"/></svg>
<svg style="left:297px;top:52px;shape-rendering:auto" width="16" height="16" viewBox="0 0 16 16" shape-rendering="crispEdges"><path d="M4.5 6Q7 3.3 10.5 4Q14 5 13.5 8.5Q13 11 10.5 11.5" fill="none" stroke="#909090" stroke-width="1.3"/><path d="M2 5V11H8Z" fill="#909090"/></svg>
<svg style="left:319px;top:59px;" width="5" height="3" viewBox="0 0 5 3" shape-rendering="crispEdges"><rect x="0" y="0" width="5" height="1" fill="#909090"/><rect x="1" y="1" width="3" height="1" fill="#909090"/><rect x="2" y="2" width="1" height="1" fill="#909090"/></svg>
<svg style="left:331px;top:52px;shape-rendering:auto" width="16" height="16" viewBox="0 0 16 16" shape-rendering="crispEdges"><path d="M11.5 6Q9 3.3 5.5 4Q2 5 2.5 8.5Q3 11 5.5 11.5" fill="none" stroke="#3A3AB8" stroke-width="1.3"/><path d="M14 5V11H8Z" fill="#3A3AB8"/></svg>
<svg style="left:353px;top:59px;" width="5" height="3" viewBox="0 0 5 3" shape-rendering="crispEdges"><rect x="0" y="0" width="5" height="1" fill="#000"/><rect x="1" y="1" width="3" height="1" fill="#000"/><rect x="2" y="2" width="1" height="1" fill="#000"/></svg>
<svg style="left:371px;top:50px;shape-rendering:auto" width="18" height="19" viewBox="0 0 18 19" shape-rendering="crispEdges"><circle cx="6" cy="7" r="5.3" fill="#4040F0" stroke="#404040" stroke-width="0.8"/><path d="M3 4Q6 1.5 10 3L11 8L9 11L6 9L3.5 7.5Z" fill="#30A830"/><path d="M2 3.5Q4 2 6 2L4 5Z" fill="#fff"/><rect x="3.5" y="11.5" width="7.5" height="6" rx="3" fill="#fff" stroke="#333" stroke-width="1.6"/><rect x="8.5" y="11.5" width="7.5" height="6" rx="3" fill="#fff" stroke="#333" stroke-width="1.6"/><path d="M6.5 14.5H13" stroke="#333" stroke-width="1.6"/></svg>
<svg style="left:394px;top:52px;shape-rendering:auto" width="16" height="16" viewBox="0 0 16 16" shape-rendering="crispEdges"><path d="M3 3H11.5V4.5M3 3L7 7.5L3 12H11.5V10.5" fill="none" stroke="#333" stroke-width="1.5"/></svg>
<svg style="left:416px;top:59px;" width="5" height="3" viewBox="0 0 5 3" shape-rendering="crispEdges"><rect x="0" y="0" width="5" height="1" fill="#000"/><rect x="1" y="1" width="3" height="1" fill="#000"/><rect x="2" y="2" width="1" height="1" fill="#000"/></svg>
<svg style="left:428px;top:52px;shape-rendering:auto" width="16" height="16" viewBox="0 0 16 16" shape-rendering="crispEdges"><text x="0.5" y="7" font-family="Liberation Serif" font-weight="bold" font-size="8.5" fill="#3A3AC0">A</text><text x="0.8" y="15" font-family="Liberation Serif" font-weight="bold" font-size="8.5" fill="#B03030">Z</text><path d="M12.5 0V14" stroke="#333" stroke-width="1.2"/><path d="M10 10H15L12.5 15Z" fill="#333"/></svg>
<svg style="left:451px;top:52px;shape-rendering:auto" width="16" height="16" viewBox="0 0 16 16" shape-rendering="crispEdges"><text x="0.8" y="7" font-family="Liberation Serif" font-weight="bold" font-size="8.5" fill="#B03030">Z</text><text x="0.5" y="15" font-family="Liberation Serif" font-weight="bold" font-size="8.5" fill="#3A3AC0">A</text><path d="M12.5 0V14" stroke="#333" stroke-width="1.2"/><path d="M10 10H15L12.5 15Z" fill="#333"/></svg>
<svg style="left:478px;top:50px;shape-rendering:auto" width="20" height="20" viewBox="0 0 20 20" shape-rendering="crispEdges"><path d="M2.5 17.5V5L5.5 2V8.5" fill="#F0F0F0" stroke="#333" stroke-width="1"/><path d="M2.5 17.5H16" stroke="#333" stroke-width="1.2"/><path d="M3.5 16.3H15.5" stroke="#fff" stroke-width="1"/><rect x="4.5" y="8.5" width="3.5" height="7" fill="#4848F8" stroke="#333" stroke-width="0.9"/><rect x="8.5" y="3" width="4" height="12.5" fill="#F8F840" stroke="#333" stroke-width="0.9"/><rect x="12.5" y="5.5" width="4" height="10" fill="#F84848" stroke="#333" stroke-width="0.9"/><path d="M16.5 14.5L17.5 15.5L16 17" stroke="#333" fill="none"/></svg>
<svg style="left:500px;top:49px;shape-rendering:auto" width="24" height="22" viewBox="0 0 24 22" shape-rendering="crispEdges"><rect x="0" y="0" width="24" height="22" fill="#0A246A"/><rect x="1" y="1" width="22" height="20" fill="#D3D4DA"/><path d="M7 4L9.5 2H17L14.5 4Z" fill="#D8D8C0"/><path d="M9.5 2.5H16.5V10" fill="none" stroke="#000" stroke-width="1.2"/><rect x="7" y="4" width="6" height="7" fill="#F0F000"/><path d="M13 4H14.5L16.5 2.5V10L14.5 12H13Z" fill="#A8A000"/><path d="M3 14.5L9.5 7.5V17.5Z" fill="#1018D0"/><path d="M5 13H8" stroke="#D3D4DA" stroke-width="0.8"/><rect x="9" y="7" width="1.6" height="11" fill="#202020"/><ellipse cx="13.5" cy="16" rx="3.2" ry="3" fill="#20F0F0"/><path d="M11 12.5L16 9.5L18.5 13L14 16Z" fill="#B8B8B8"/><path d="M16.5 9.5L18.5 12.5L15.5 18.5" fill="none" stroke="#000" stroke-width="1.1"/></svg>
<div style="left:524px;top:51px;width:57px;height:18px;background:#fff;"></div>
<div style="left:569px;top:52px;width:11px;height:16px;background:#DBD8D1;"></div>
<svg style="left:571px;top:59px;" width="5" height="3" viewBox="0 0 5 3" shape-rendering="crispEdges"><rect x="0" y="0" width="5" height="1" fill="#000"/><rect x="1" y="1" width="3" height="1" fill="#000"/><rect x="2" y="2" width="1" height="1" fill="#000"/></svg>
<div class="t" style="left:527px;top:54px;font-size:11px;line-height:11px;color:#000;">100%</div>
<svg style="left:586px;top:52px;shape-rendering:auto" width="16" height="16" viewBox="0 0 16 16" shape-rendering="crispEdges"><defs><pattern id="hy" width="3" height="2" patternUnits="userSpaceOnUse"><rect width="3" height="2" fill="#fff"/><rect x="1" y="0" width="1" height="1" fill="#F0F040"/></pattern></defs><path d="M1.5 0.5H12.5L13.5 1.5V11.5H11.5V15.5L8.5 12.5H1.5L0.5 11.5V1.5Z" fill="url(#hy)" stroke="#333" stroke-linejoin="round"/><text x="3.6" y="10" font-family="Liberation Serif" font-weight="bold" font-size="11" fill="#3A3AC0">?</text></svg>
<svg style="left:608px;top:64px;" width="5" height="3" viewBox="0 0 5 3" shape-rendering="crispEdges"><rect x="0" y="0" width="5" height="1" fill="#000"/><rect x="1" y="1" width="3" height="1" fill="#000"/><rect x="2" y="2" width="1" height="1" fill="#000"/></svg>
<div style="left:12px;top:77px;width:127px;height:18px;background:#fff;"></div>
<div style="left:127px;top:78px;width:11px;height:16px;background:#DBD8D1;"></div>
<svg style="left:129px;top:85px;" width="5" height="3" viewBox="0 0 5 3" shape-rendering="crispEdges"><rect x="0" y="0" width="5" height="1" fill="#000"/><rect x="1" y="1" width="3" height="1" fill="#000"/><rect x="2" y="2" width="1" height="1" fill="#000"/></svg>
<div class="t" style="left:15px;top:81px;font-size:11px;line-height:11px;color:#000;">Arial</div>
<div style="left:141px;top:77px;width:38px;height:18px;background:#fff;"></div>
<div style="left:167px;top:78px;width:11px;height:16px;background:#DBD8D1;"></div>
<svg style="left:169px;top:85px;" width="5" height="3" viewBox="0 0 5 3" shape-rendering="crispEdges"><rect x="0" y="0" width="5" height="1" fill="#000"/><rect x="1" y="1" width="3" height="1" fill="#000"/><rect x="2" y="2" width="1" height="1" fill="#000"/></svg>
<div class="t" style="left:144px;top:81px;font-size:11px;line-height:11px;color:#000;">10</div>
<svg style="left:190px;top:78px;shape-rendering:auto" width="14" height="16" viewBox="0 0 14 16" shape-rendering="crispEdges"><text x="1.5" y="12.6" font-family="Liberation Serif" font-weight="bold" font-size="14.5" fill="#404040" textLength="10" lengthAdjust="spacingAndGlyphs">B</text></svg>
<svg style="left:212px;top:78px;shape-rendering:auto" width="14" height="16" viewBox="0 0 14 16" shape-rendering="crispEdges"><text x="2" y="12.6" font-family="Liberation Serif" font-weight="bold" font-style="italic" font-size="14.5" fill="#404040" textLength="9.5" lengthAdjust="spacingAndGlyphs">I</text></svg>
<svg style="left:236px;top:78px;shape-rendering:auto" width="14" height="16" viewBox="0 0 14 16" shape-rendering="crispEdges"><text x="1.8" y="12" font-family="Liberation Serif" font-weight="bold" font-size="13" fill="#404040" textLength="9.4" lengthAdjust="spacingAndGlyphs">U</text><rect x="2" y="13" width="9" height="1.2" fill="#404040"/></svg>
<svg style="left:264px;top:80px;" width="14" height="11" viewBox="0 0 14 11" shape-rendering="crispEdges"><rect x="0" y="0" width="14" height="1" fill="#404040"/><rect x="0" y="2" width="10" height="1" fill="#404040"/><rect x="0" y="4" width="14" height="1" fill="#404040"/><rect x="0" y="6" width="10" height="1" fill="#404040"/><rect x="0" y="8" width="14" height="1" fill="#404040"/><rect x="0" y="10" width="10" height="1" fill="#404040"/></svg>
<svg style="left:287px;top:80px;" width="14" height="11" viewBox="0 0 14 11" shape-rendering="crispEdges"><rect x="0" y="0" width="14" height="1" fill="#404040"/><rect x="2" y="2" width="10" height="1" fill="#404040"/><rect x="0" y="4" width="14" height="1" fill="#404040"/><rect x="2" y="6" width="10" height="1" fill="#404040"/><rect x="0" y="8" width="14" height="1" fill="#404040"/><rect x="2" y="10" width="10" height="1" fill="#404040"/></svg>
<svg style="left:310px;top:80px;" width="14" height="11" viewBox="0 0 14 11" shape-rendering="crispEdges"><rect x="0" y="0" width="14" height="1" fill="#404040"/><rect x="4" y="2" width="10" height="1" fill="#404040"/><rect x="0" y="4" width="14" height="1" fill="#404040"/><rect x="4" y="6" width="10" height="1" fill="#404040"/><rect x="0" y="8" width="14" height="1" fill="#404040"/><rect x="4" y="10" width="10" height="1" fill="#404040"/></svg>
<svg style="left:333px;top:78px;" width="16" height="15" viewBox="0 0 16 15" shape-rendering="crispEdges"><rect x="0" y="0" width="16" height="15" fill="#404040"/><rect x="1" y="1" width="6" height="2" fill="#fff"/><rect x="8" y="1" width="7" height="2" fill="#fff"/><rect x="1" y="4" width="14" height="7" fill="#fff"/><rect x="1" y="12" width="6" height="2" fill="#fff"/><rect x="8" y="12" width="7" height="2" fill="#fff"/><rect x="1" y="7" width="4" height="1" fill="#404040"/><rect x="2" y="6" width="1" height="3" fill="#404040"/><rect x="2" y="5" width="1" height="1" fill="#404040"/><rect x="2" y="9" width="1" height="1" fill="#404040"/><rect x="11" y="7" width="4" height="1" fill="#404040"/><rect x="13" y="6" width="1" height="3" fill="#404040"/><rect x="13" y="5" width="1" height="1" fill="#404040"/><rect x="13" y="9" width="1" height="1" fill="#404040"/><rect x="6" y="5" width="3" height="1" fill="#404040"/><rect x="9" y="6" width="1" height="4" fill="#404040"/><rect x="6" y="7" width="3" height="1" fill="#404040"/><rect x="5" y="8" width="1" height="1" fill="#404040"/><rect x="6" y="9" width="3" height="1" fill="#404040"/></svg>
<svg style="left:363px;top:78px;shape-rendering:auto" width="14" height="16" viewBox="0 0 14 16" shape-rendering="crispEdges"><text x="1.5" y="12.3" font-family="Liberation Sans" font-weight="bold" font-size="14" fill="#404040" textLength="10.5" lengthAdjust="spacingAndGlyphs">$</text></svg>
<svg style="left:386px;top:78px;shape-rendering:auto" width="15" height="16" viewBox="0 0 15 16" shape-rendering="crispEdges"><text x="1.3" y="13" font-family="Liberation Sans" font-weight="bold" font-size="13.5" fill="#404040" textLength="12.5" lengthAdjust="spacingAndGlyphs">%</text></svg>
<svg style="left:410px;top:78px;shape-rendering:auto" width="10" height="16" viewBox="0 0 10 16" shape-rendering="crispEdges"><text x="1.5" y="13.5" font-family="Liberation Sans" font-weight="bold" font-size="17" fill="#404040">,</text></svg>
<svg style="left:431px;top:78px;shape-rendering:auto" width="16" height="16" viewBox="0 0 16 16" shape-rendering="crispEdges"><path d="M1 4.5H6M1 4.5L3.5 2M1 4.5L3.5 7" stroke="#3A3AC0" stroke-width="1.4" fill="none"/><rect x="8" y="5" width="2" height="2" fill="#404040"/><text x="10" y="7.3" font-family="Liberation Sans" font-size="8.5" fill="#404040">0</text><rect x="2" y="12" width="2" height="2" fill="#404040"/><text x="4.2" y="14.3" font-family="Liberation Sans" font-size="8.5" fill="#404040">00</text></svg>
<svg style="left:453px;top:78px;shape-rendering:auto" width="16" height="16" viewBox="0 0 16 16" shape-rendering="crispEdges"><rect x="4" y="5" width="2" height="2" fill="#404040"/><text x="6.2" y="7.3" font-family="Liberation Sans" font-size="8.5" fill="#404040">00</text><path d="M1 11.5H6M6 11.5L3.5 9M6 11.5L3.5 14" stroke="#3A3AC0" stroke-width="1.4" fill="none"/><rect x="8" y="12" width="2" height="2" fill="#404040"/><text x="10.2" y="14.3" font-family="Liberation Sans" font-size="8.5" fill="#404040">0</text></svg>
<svg style="left:482px;top:78px;shape-rendering:auto" width="17" height="16" viewBox="0 0 17 16" shape-rendering="crispEdges"><rect x="7" y="0" width="1" height="15" fill="#404040" opacity="0.9"/><rect x="2" y="2" width="4" height="1" fill="#404040"/><rect x="9" y="2" width="8" height="1" fill="#404040"/><rect x="8" y="4" width="9" height="2" fill="#404040"/><rect x="8" y="7" width="5" height="2" fill="#404040"/><rect x="2" y="10" width="15" height="1" fill="#404040"/><rect x="2" y="12" width="5" height="1" fill="#404040"/><rect x="9" y="12" width="3" height="1" fill="#404040"/><path d="M0.5 6.5L4 3.5V9.5Z" fill="#3A3AC0"/><rect x="3" y="6" width="4" height="1.5" fill="#3A3AC0"/></svg>
<svg style="left:505px;top:78px;shape-rendering:auto" width="17" height="16" viewBox="0 0 17 16" shape-rendering="crispEdges"><rect x="7" y="0" width="1" height="15" fill="#404040" opacity="0.9"/><rect x="2" y="2" width="4" height="1" fill="#404040"/><rect x="9" y="2" width="8" height="1" fill="#404040"/><rect x="8" y="4" width="9" height="2" fill="#404040"/><rect x="8" y="7" width="5" height="2" fill="#404040"/><rect x="2" y="10" width="15" height="1" fill="#404040"/><rect x="2" y="12" width="5" height="1" fill="#404040"/><rect x="9" y="12" width="3" height="1" fill="#404040"/><path d="M6.5 6.5L3 3.5V9.5Z" fill="#3A3AC0"/><rect x="0" y="6" width="4" height="1.5" fill="#3A3AC0"/></svg>
<svg style="left:537px;top:79px;" width="14" height="15" viewBox="0 0 14 15" shape-rendering="crispEdges"><rect x="0" y="0" width="1" height="1" fill="#909090"/><rect x="2" y="0" width="1" height="1" fill="#909090"/><rect x="4" y="0" width="1" height="1" fill="#909090"/><rect x="6" y="0" width="1" height="1" fill="#909090"/><rect x="8" y="0" width="1" height="1" fill="#909090"/><rect x="10" y="0" width="1" height="1" fill="#909090"/><rect x="12" y="0" width="1" height="1" fill="#909090"/><rect x="0" y="2" width="1" height="1" fill="#909090"/><rect x="6" y="2" width="1" height="1" fill="#909090"/><rect x="12" y="2" width="1" height="1" fill="#909090"/><rect x="0" y="4" width="1" height="1" fill="#909090"/><rect x="6" y="4" width="1" height="1" fill="#909090"/><rect x="12" y="4" width="1" height="1" fill="#909090"/><rect x="0" y="6" width="1" height="1" fill="#909090"/><rect x="6" y="6" width="1" height="1" fill="#909090"/><rect x="12" y="6" width="1" height="1" fill="#909090"/><rect x="0" y="8" width="1" height="1" fill="#909090"/><rect x="6" y="8" width="1" height="1" fill="#909090"/><rect x="12" y="8" width="1" height="1" fill="#909090"/><rect x="0" y="10" width="1" height="1" fill="#909090"/><rect x="2" y="10" width="1" height="1" fill="#909090"/><rect x="4" y="10" width="1" height="1" fill="#909090"/><rect x="6" y="10" width="1" height="1" fill="#909090"/><rect x="8" y="10" width="1" height="1" fill="#909090"/><rect x="10" y="10" width="1" height="1" fill="#909090"/><rect x="12" y="10" width="1" height="1" fill="#909090"/><rect x="0" y="13" width="14" height="2" fill="#606060"/></svg>
<svg style="left:556px;top:85px;" width="5" height="3" viewBox="0 0 5 3" shape-rendering="crispEdges"><rect x="0" y="0" width="5" height="1" fill="#000"/><rect x="1" y="1" width="3" height="1" fill="#000"/><rect x="2" y="2" width="1" height="1" fill="#000"/></svg>
<svg style="left:569px;top:78px;shape-rendering:auto" width="17" height="16" viewBox="0 0 17 16" shape-rendering="crispEdges"><path d="M2.5 6.5L7.5 1.5L12.5 6.5L7.5 11.5Z" fill="#E4E4E4" stroke="#404040"/><path d="M7.5 11L12 6.5L10 4.5L5 9.5Z" fill="#A8A8A8"/><path d="M6.5 6V1.5Q8 -0.5 9.5 1.5V6" fill="none" stroke="#3A3AC0" stroke-width="1.2"/><path d="M11 3.5Q15.5 3 14.5 9.5" fill="none" stroke="#3A3AC0" stroke-width="2.2"/><rect x="0" y="12" width="17" height="4" fill="#FFFF00"/></svg>
<svg style="left:591px;top:85px;" width="5" height="3" viewBox="0 0 5 3" shape-rendering="crispEdges"><rect x="0" y="0" width="5" height="1" fill="#000"/><rect x="1" y="1" width="3" height="1" fill="#000"/><rect x="2" y="2" width="1" height="1" fill="#000"/></svg>
<svg style="left:603px;top:78px;shape-rendering:auto" width="17" height="16" viewBox="0 0 17 16" shape-rendering="crispEdges"><path d="M0.5 10.5H5M9.5 10.5H15M2.5 10.5L7.5 0.5L12.5 10.5M4.5 7H10.5" fill="none" stroke="#3A3AC0" stroke-width="1.5"/><rect x="0" y="12" width="17" height="4" fill="#000"/></svg>
<svg style="left:625px;top:85px;" width="5" height="3" viewBox="0 0 5 3" shape-rendering="crispEdges"><rect x="0" y="0" width="5" height="1" fill="#000"/><rect x="1" y="1" width="3" height="1" fill="#000"/><rect x="2" y="2" width="1" height="1" fill="#000"/></svg>
<svg style="left:637px;top:90px;" width="5" height="3" viewBox="0 0 5 3" shape-rendering="crispEdges"><rect x="0" y="0" width="5" height="1" fill="#000"/><rect x="1" y="1" width="3" height="1" fill="#000"/><rect x="2" y="2" width="1" height="1" fill="#000"/></svg>
<svg style="left:13px;top:103px;shape-rendering:auto" width="17" height="16" viewBox="0 0 17 16" shape-rendering="crispEdges"><defs><pattern id="py" width="2" height="2" patternUnits="userSpaceOnUse"><rect width="2" height="2" fill="#FFFF60"/><rect width="1" height="1" fill="#fff"/><rect x="1" y="1" width="1" height="1" fill="#fff"/></pattern></defs><rect x="2" y="5" width="14" height="10" fill="#404040"/><rect x="3" y="6" width="12" height="8" fill="url(#py)"/><rect x="11" y="10" width="4" height="4" fill="#404040"/><rect x="12" y="11" width="2" height="2" fill="#fff"/><path d="M5 0V6M1 3H9M2 0L8 6M8 0L2 6" stroke="#E8E800" stroke-width="0.9"/></svg>
<svg style="left:37px;top:103px;shape-rendering:auto" width="17" height="16" viewBox="0 0 17 16" shape-rendering="crispEdges"><defs><pattern id="pg37" width="2" height="2" patternUnits="userSpaceOnUse"><rect width="2" height="2" fill="#8C8C8C"/><rect width="1" height="1" fill="#DBD8D1"/><rect x="1" y="1" width="1" height="1" fill="#DBD8D1"/></pattern></defs><path d="M1 5H16V15H1Z" fill="url(#pg37)"/><path d="M1 5H16V15H1Z" fill="none" stroke="#8C8C8C"/><path d="M1 4L5 0V2H10V6H5V8Z" fill="#8C8C8C"/></svg>
<svg style="left:60px;top:103px;shape-rendering:auto" width="17" height="16" viewBox="0 0 17 16" shape-rendering="crispEdges"><defs><pattern id="pg60" width="2" height="2" patternUnits="userSpaceOnUse"><rect width="2" height="2" fill="#8C8C8C"/><rect width="1" height="1" fill="#DBD8D1"/><rect x="1" y="1" width="1" height="1" fill="#DBD8D1"/></pattern></defs><path d="M1 5H16V15H1Z" fill="url(#pg60)"/><path d="M1 5H16V15H1Z" fill="none" stroke="#8C8C8C"/><path d="M10 4L6 0V2H1V6H6V8Z" fill="#8C8C8C"/></svg>
<svg style="left:83px;top:103px;shape-rendering:auto" width="17" height="16" viewBox="0 0 17 16" shape-rendering="crispEdges"><defs><pattern id="ph" width="2" height="2" patternUnits="userSpaceOnUse"><rect width="2" height="2" fill="#8C8C8C"/><rect width="1" height="1" fill="#DBD8D1"/><rect x="1" y="1" width="1" height="1" fill="#DBD8D1"/></pattern></defs><path d="M1.5 1.5H16" stroke="#8C8C8C" stroke-dasharray="1 1"/><path d="M1.5 1.5V14" stroke="#8C8C8C" stroke-dasharray="1 1"/><path d="M1 15L16 3V15Z" fill="url(#ph)" stroke="#8C8C8C"/></svg>
<svg style="left:106px;top:103px;shape-rendering:auto" width="17" height="16" viewBox="0 0 17 16" shape-rendering="crispEdges"><defs><pattern id="py2" width="2" height="2" patternUnits="userSpaceOnUse"><rect width="2" height="2" fill="#FFFF60"/><rect width="1" height="1" fill="#fff"/><rect x="1" y="1" width="1" height="1" fill="#fff"/></pattern></defs><rect x="0" y="0" width="10" height="8" fill="#404040"/><rect x="1" y="1" width="8" height="6" fill="url(#py2)"/><rect x="3" y="3" width="10" height="8" fill="#404040"/><rect x="4" y="4" width="8" height="6" fill="url(#py2)"/><rect x="6" y="6" width="10" height="9" fill="#404040"/><rect x="7" y="7" width="8" height="7" fill="url(#py2)"/><rect x="12" y="11" width="3" height="3" fill="#404040"/><rect x="13" y="12" width="1" height="1" fill="#fff"/></svg>
<svg style="left:129px;top:103px;shape-rendering:auto" width="17" height="16" viewBox="0 0 17 16" shape-rendering="crispEdges"><defs><pattern id="pg129" width="2" height="2" patternUnits="userSpaceOnUse"><rect width="2" height="2" fill="#8C8C8C"/><rect width="1" height="1" fill="#DBD8D1"/><rect x="1" y="1" width="1" height="1" fill="#DBD8D1"/></pattern></defs><path d="M1 5H16V15H1Z" fill="url(#pg129)"/><path d="M1 5H16V15H1Z" fill="none" stroke="#8C8C8C"/><path d="M2 4L7 9M2 9L10 1" stroke="#8C8C8C" stroke-width="2"/></svg>
<svg style="left:159px;top:103px;shape-rendering:auto" width="16" height="17" viewBox="0 0 16 17" shape-rendering="crispEdges"><rect x="1.5" y="2.5" width="11" height="13" rx="1" fill="#fff" stroke="#404040"/><rect x="4" y="1" width="6" height="3" fill="#E0E0E0" stroke="#404040" stroke-width="0.8"/><path d="M3 9L6 12L11 6" fill="none" stroke="#D02020" stroke-width="1.6"/></svg>
<svg style="left:181px;top:103px;shape-rendering:auto" width="17" height="17" viewBox="0 0 17 17" shape-rendering="crispEdges"><rect x="1" y="1" width="9" height="9" fill="#8C8C8C"/><rect x="3" y="2" width="4" height="3" fill="#DBD8D1"/><rect x="6" y="7" width="10" height="9" fill="#DBD8D1" stroke="#8C8C8C"/><path d="M11 9V13M9 11L11 13L13 11" stroke="#8C8C8C" fill="none"/></svg>
<svg style="left:204px;top:103px;shape-rendering:auto" width="17" height="17" viewBox="0 0 17 17" shape-rendering="crispEdges"><path d="M4.5 6.5L10 1.5L15.5 6.5V14.5H4.5Z" fill="#fff" stroke="#404040"/><path d="M7 8.5H13M7 10.5H13" stroke="#3A3AC0"/><rect x="13" y="4" width="2" height="2" fill="#E02020"/><rect x="1.5" y="9.5" width="3.5" height="6" rx="1.7" fill="#fff" stroke="#404040" stroke-width="1.2"/></svg>
<svg style="left:232px;top:103px;shape-rendering:auto" width="17" height="16" viewBox="0 0 17 16" shape-rendering="crispEdges"><path d="M1 3L9 3L5 8Z" fill="#8C8C8C"/><rect x="4.5" y="6" width="1.5" height="7" fill="#8C8C8C"/><path d="M16 3V8Q16 11 12 11H9" fill="none" stroke="#8C8C8C" stroke-width="2"/><path d="M9 8V14L6 11Z" fill="#8C8C8C"/></svg>
<div class="t" style="left:251px;top:107px;font-size:11px;line-height:11px;color:#8C8C8C;letter-spacing:0.05px;">Reply with <u>C</u>hanges...</div>
<div class="t" style="left:365px;top:107px;font-size:11px;line-height:11px;color:#8C8C8C;">E<u>n</u>d Review...</div>
<svg style="left:441px;top:116px;" width="5" height="3" viewBox="0 0 5 3" shape-rendering="crispEdges"><rect x="0" y="0" width="5" height="1" fill="#000"/><rect x="1" y="1" width="3" height="1" fill="#000"/><rect x="2" y="2" width="1" height="1" fill="#000"/></svg>
<svg style="left:58px;top:733px;shape-rendering:auto" width="12" height="17" viewBox="0 0 12 17" shape-rendering="crispEdges"><path d="M1.5 1.5V13.5L4.5 10.5L7 15.5L9 14.5L6.5 9.5H10.5Z" fill="#fff" stroke="#404040" stroke-linejoin="round"/></svg>
<svg style="left:158px;top:734px;shape-rendering:auto" width="16" height="16" viewBox="0 0 16 16" shape-rendering="crispEdges"><path d="M2 2L12.5 12.5" stroke="#404040" stroke-width="1.3"/></svg>
<svg style="left:182px;top:734px;shape-rendering:auto" width="16" height="16" viewBox="0 0 16 16" shape-rendering="crispEdges"><path d="M2 2L10 10" stroke="#404040" stroke-width="1.3"/><path d="M13 13L6.5 10.5L10.5 6.5Z" fill="#404040"/></svg>
<div style="left:204px;top:735px;width:16px;height:13px;background:#404040;"></div>
<div style="left:205px;top:736px;width:14px;height:11px;background:#DBD8D1;"></div>
<svg style="left:226px;top:734px;shape-rendering:auto" width="17" height="15" viewBox="0 0 17 15" shape-rendering="crispEdges"><ellipse cx="8.5" cy="7" rx="7.5" ry="5.5" fill="none" stroke="#404040" stroke-width="1.1"/></svg>
<svg style="left:250px;top:734px;shape-rendering:auto" width="16" height="16" viewBox="0 0 16 16" shape-rendering="crispEdges"><rect x="0.5" y="0.5" width="14" height="14" fill="#fff" stroke="#404040"/><rect x="14" y="2" width="1.5" height="13.5" fill="#A0A0A0"/><path d="M2.5 6.5L5 1.5L7.5 6.5M3.5 5H6.5" fill="none" stroke="#404040" stroke-width="1.2"/><path d="M9 2.5H13M9 4.5H13M9 6.5H13M2 8.5H13M2 10.5H13M2 12.5H13" stroke="#404040" fill="none"/></svg>
<svg style="left:273px;top:734px;shape-rendering:auto" width="16" height="16" viewBox="0 0 16 16" shape-rendering="crispEdges"><text x="-1" y="15" font-family="Liberation Serif" font-weight="bold" font-style="italic" font-size="19" fill="#9A9AA8">A</text><text x="-2" y="14" font-family="Liberation Serif" font-weight="bold" font-style="italic" font-size="19" fill="#3A3AD0">A</text><rect x="12.5" y="1" width="1.5" height="13" fill="#A0A0A0"/><rect x="14" y="2" width="1" height="13" fill="#404040"/></svg>
<svg style="left:296px;top:734px;shape-rendering:auto" width="16" height="17" viewBox="0 0 16 17" shape-rendering="crispEdges"><path d="M5 2.5Q8 0.5 11 2.5M12.5 9Q12 12 10.5 13M5.5 13Q4 12 3.5 9.5" fill="none" stroke="#3A3AC0" stroke-width="1.1"/><path d="M12 0.5L12.5 4L9 3.5Z M9 12.5L12 14.5L11.5 11Z M2.5 8.5L3 12L5.5 10Z" fill="#3A3AC0"/><circle cx="3" cy="6" r="1.9" fill="#F0F020" stroke="#404040" stroke-width="0.8"/><circle cx="13" cy="6" r="1.9" fill="#F03030" stroke="#404040" stroke-width="0.8"/><circle cx="8" cy="14" r="1.9" fill="#A030C0" stroke="#404040" stroke-width="0.8"/></svg>
<svg style="left:320px;top:734px;shape-rendering:auto" width="16" height="16" viewBox="0 0 16 16" shape-rendering="crispEdges"><rect x="0" y="0" width="16" height="16" fill="#fff"/><path d="M0.5 0V16M15.5 0V16M0 0.5H16M0 15.5H16" stroke="#404040" stroke-dasharray="1 1"/><path d="M5 2H11V6L9 5Z" fill="#B03030"/><path d="M6 4Q4 8 6 12H10V5Z" fill="#F8F0D0" stroke="#A030C0" stroke-width="0.8"/><circle cx="7.5" cy="7" r="0.8" fill="#202020"/><path d="M3 15Q8 11 13 15" fill="#A030C0"/><rect x="7" y="9" width="2" height="2" fill="#F0F020"/></svg>
<svg style="left:343px;top:734px;shape-rendering:auto" width="16" height="16" viewBox="0 0 16 16" shape-rendering="crispEdges"><defs><pattern id="py3" width="2" height="2" patternUnits="userSpaceOnUse"><rect width="2" height="2" fill="#FFFF60"/><rect width="1" height="1" fill="#fff"/><rect x="1" y="1" width="1" height="1" fill="#fff"/></pattern></defs><rect x="0" y="1" width="16" height="14" fill="#404040"/><rect x="1" y="2" width="14" height="12" fill="url(#py3)"/><circle cx="11.5" cy="5" r="1.8" fill="#A0A020" stroke="#404040" stroke-width="0.7"/><path d="M1 13L6 8L9 11L11 9L15 13V14H1Z" fill="#A0A0A0" stroke="#404040" stroke-width="0.7"/></svg>
<svg style="left:371px;top:734px;shape-rendering:auto" width="17" height="16" viewBox="0 0 17 16" shape-rendering="crispEdges"><path d="M2.5 6.5L7.5 1.5L12.5 6.5L7.5 11.5Z" fill="#E4E4E4" stroke="#404040"/><path d="M7.5 11L12 6.5L10 4.5L5 9.5Z" fill="#A8A8A8"/><path d="M6.5 6V1.5Q8 -0.5 9.5 1.5V6" fill="none" stroke="#3A3AC0" stroke-width="1.2"/><path d="M11 3.5Q15.5 3 14.5 9.5" fill="none" stroke="#3A3AC0" stroke-width="2.2"/><rect x="0" y="12" width="17" height="4" fill="#FFFF00"/></svg>
<svg style="left:393px;top:741px;" width="5" height="3" viewBox="0 0 5 3" shape-rendering="crispEdges"><rect x="0" y="0" width="5" height="1" fill="#000"/><rect x="1" y="1" width="3" height="1" fill="#000"/><rect x="2" y="2" width="1" height="1" fill="#000"/></svg>
<svg style="left:405px;top:734px;shape-rendering:auto" width="16" height="16" viewBox="0 0 16 16" shape-rendering="crispEdges"><path d="M15 1L12 0L5 8L4 11L7 10L14 3Z" fill="#fff" stroke="#404040" stroke-width="0.8"/><path d="M12 0L15 1L14 3L12 2Z" fill="#F0E040"/><path d="M5 9L13 2" stroke="#3A3AC0" stroke-width="1.2"/><rect x="0" y="8" width="4" height="2" fill="#3A7070"/><rect x="0" y="12" width="16" height="4" fill="#4848F0"/></svg>
<svg style="left:427px;top:741px;" width="5" height="3" viewBox="0 0 5 3" shape-rendering="crispEdges"><rect x="0" y="0" width="5" height="1" fill="#000"/><rect x="1" y="1" width="3" height="1" fill="#000"/><rect x="2" y="2" width="1" height="1" fill="#000"/></svg>
<svg style="left:438px;top:734px;shape-rendering:auto" width="17" height="16" viewBox="0 0 17 16" shape-rendering="crispEdges"><path d="M0.5 10.5H5M9.5 10.5H15M2.5 10.5L7.5 0.5L12.5 10.5M4.5 7H10.5" fill="none" stroke="#3A3AC0" stroke-width="1.5"/><rect x="0" y="12" width="17" height="4" fill="#000"/></svg>
<svg style="left:460px;top:741px;" width="5" height="3" viewBox="0 0 5 3" shape-rendering="crispEdges"><rect x="0" y="0" width="5" height="1" fill="#000"/><rect x="1" y="1" width="3" height="1" fill="#000"/><rect x="2" y="2" width="1" height="1" fill="#000"/></svg>
<svg style="left:473px;top:734px;" width="16" height="14" viewBox="0 0 16 14" shape-rendering="crispEdges"><rect x="0" y="2" width="15" height="1" fill="#404040"/><rect x="0" y="5" width="15" height="2" fill="#404040"/><rect x="0" y="9" width="15" height="3" fill="#404040"/></svg>
<svg style="left:496px;top:734px;" width="16" height="14" viewBox="0 0 16 14" shape-rendering="crispEdges"><rect x="0" y="2" width="15" height="1" fill="#404040"/><path d="M0 5.5H15M0 8.5H15M0 11.5H15" stroke="#404040" stroke-dasharray="1 1"/></svg>
<svg style="left:520px;top:734px;shape-rendering:auto" width="16" height="16" viewBox="0 0 16 16" shape-rendering="crispEdges"><path d="M0 2.5H14M14 2.5L11 0.5M14 2.5L11 4.5M1 6.5H15M1 6.5L4 4.5M1 6.5L4 8.5M1 12.5H14M1 12.5L4 10.5M1 12.5L4 14.5M14 12.5L11 10.5M14 12.5L11 14.5" stroke="#404040" stroke-width="1.3" fill="none"/></svg>
<svg style="left:543px;top:734px;shape-rendering:auto" width="16" height="16" viewBox="0 0 16 16" shape-rendering="crispEdges"><defs><pattern id="pd" width="2" height="2" patternUnits="userSpaceOnUse"><rect width="2" height="2" fill="#404040"/><rect width="1" height="1" fill="#DBD8D1"/><rect x="1" y="1" width="1" height="1" fill="#DBD8D1"/></pattern></defs><rect x="3" y="3" width="11" height="11" fill="url(#pd)"/><rect x="0.5" y="1.5" width="10" height="10" fill="#4AA0A0" stroke="#404040"/></svg>
<svg style="left:565px;top:734px;shape-rendering:auto" width="16" height="16" viewBox="0 0 16 16" shape-rendering="crispEdges"><path d="M0.5 4.5L4.5 0.5H15.5V11.5L11.5 15.5H0.5Z" fill="#D0D0D0" stroke="#404040"/><path d="M0.5 4.5H11.5V15.5H0.5Z" fill="#4AA0A0" stroke="#404040"/><path d="M1 4L5 1H15L11 4Z" fill="#fff"/></svg>
<svg style="left:588px;top:746px;" width="5" height="3" viewBox="0 0 5 3" shape-rendering="crispEdges"><rect x="0" y="0" width="5" height="1" fill="#000"/><rect x="1" y="1" width="3" height="1" fill="#000"/><rect x="2" y="2" width="1" height="1" fill="#000"/></svg>
</body></html>
